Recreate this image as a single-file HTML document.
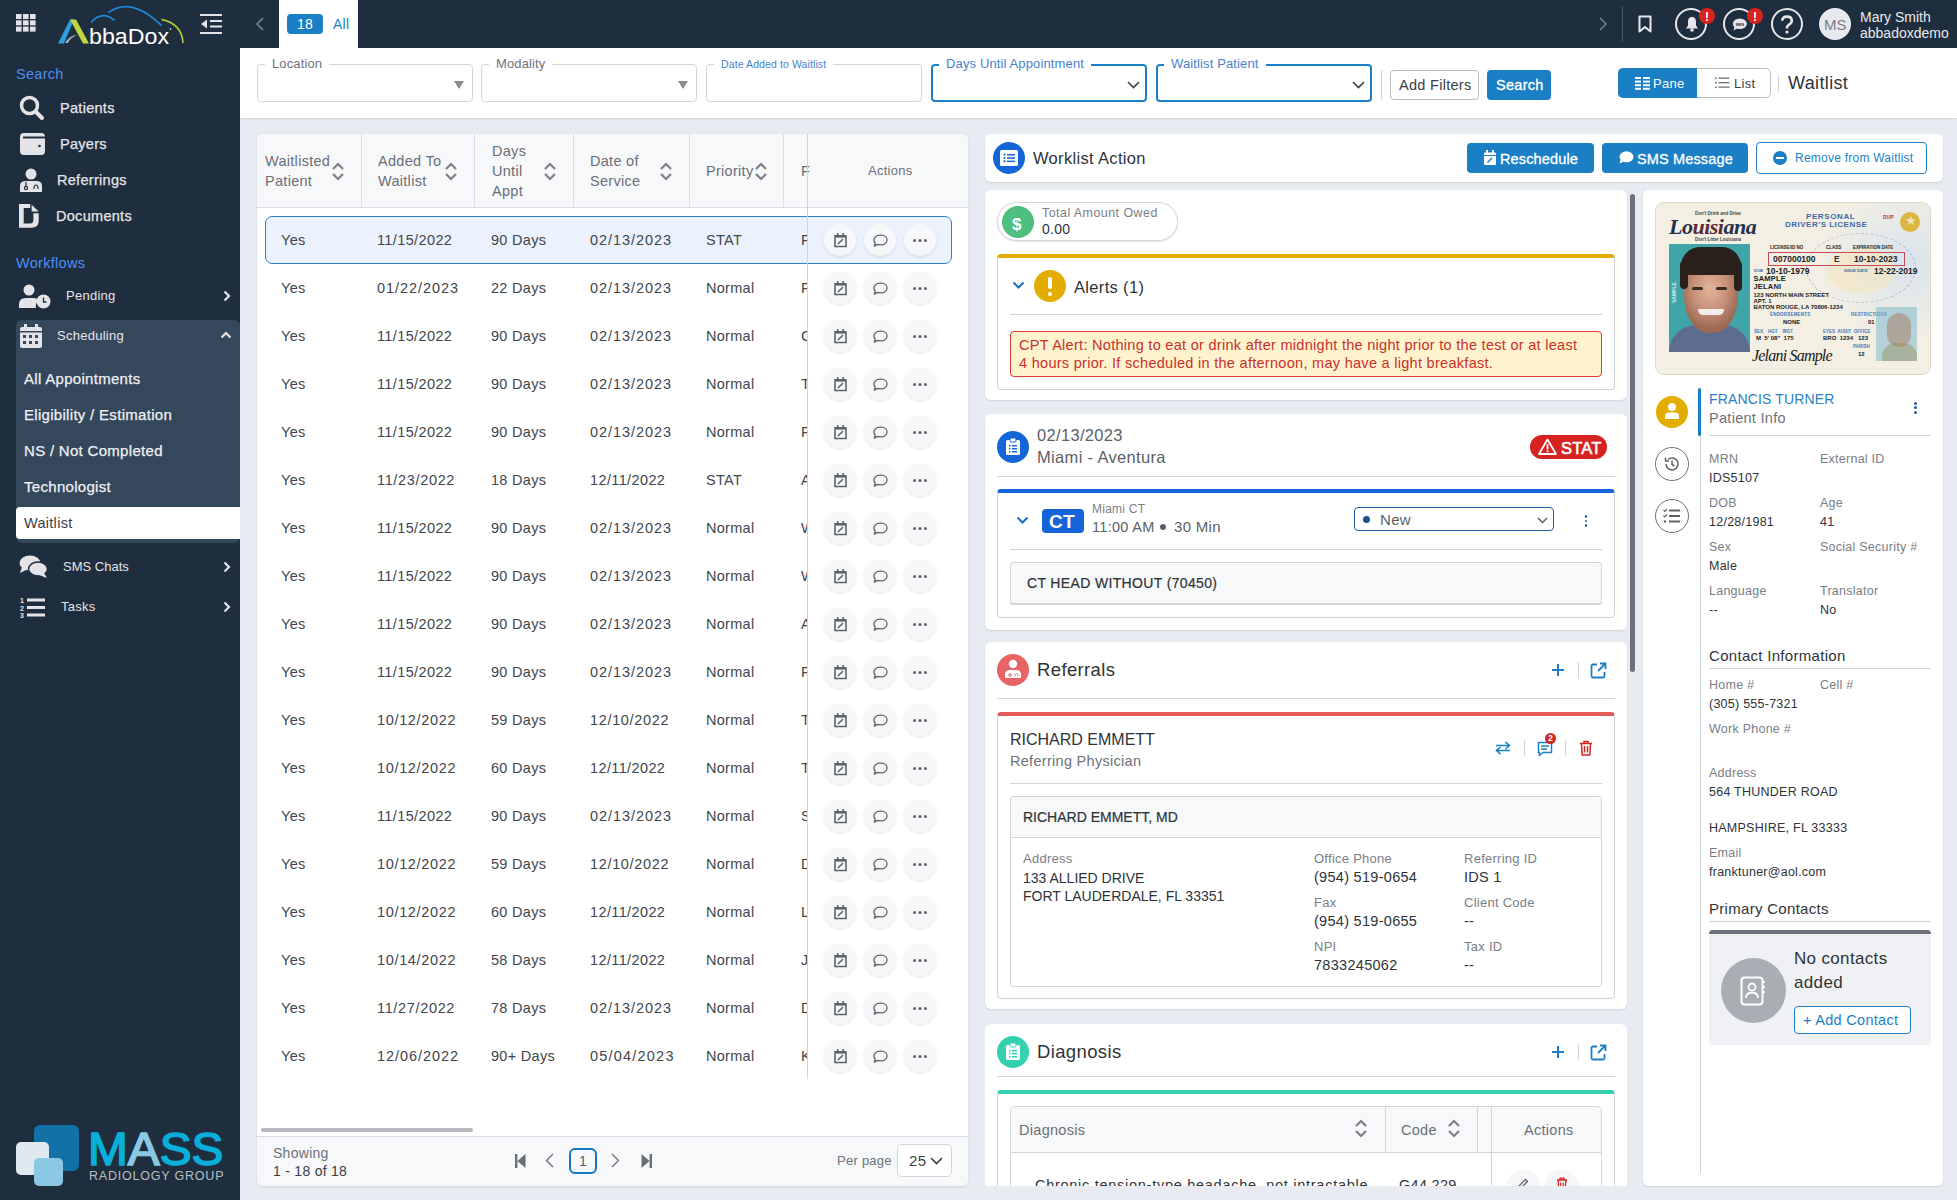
<!DOCTYPE html><html><head><meta charset="utf-8"><style>
html,body{margin:0;padding:0;width:1957px;height:1200px;overflow:hidden;background:#e8ebf2;font-family:"Liberation Sans",sans-serif;}
.a{position:absolute;box-sizing:border-box;}
.t{position:absolute;white-space:nowrap;line-height:1;letter-spacing:0.02em;}
svg{position:absolute;overflow:visible;}
</style></head><body>

<div class="a" style="left:0px;top:0px;width:1957px;height:48px;background:#1f2e3e"></div>
<div class="a" style="left:0px;top:48px;width:240px;height:1152px;background:#1f2e3e"></div>
<svg style="left:16px;top:14px" width="20" height="18"><rect x="0" y="0.0" width="5.6" height="5" fill="#e4e4e8"/><rect x="7" y="0.0" width="5.6" height="5" fill="#e4e4e8"/><rect x="14" y="0.0" width="5.6" height="5" fill="#e4e4e8"/><rect x="0" y="6.3" width="5.6" height="5" fill="#e4e4e8"/><rect x="7" y="6.3" width="5.6" height="5" fill="#e4e4e8"/><rect x="14" y="6.3" width="5.6" height="5" fill="#e4e4e8"/><rect x="0" y="12.6" width="5.6" height="5" fill="#e4e4e8"/><rect x="7" y="12.6" width="5.6" height="5" fill="#e4e4e8"/><rect x="14" y="12.6" width="5.6" height="5" fill="#e4e4e8"/></svg>
<svg style="left:56px;top:2px" width="130" height="44" viewBox="0 0 130 44">
<path d="M52.4 10.7 Q75 -6 105.5 23.6" fill="none" stroke="#1d8ad8" stroke-width="1.6"/>
<path d="M35 20.5 Q46 8 58.5 18.4" fill="none" stroke="#1d8ad8" stroke-width="1.6"/>
<path d="M105.5 17.4 Q126 22 127 41" fill="none" stroke="#b5cc3a" stroke-width="1.6"/>
<polygon points="2,41.5 14,17.5 18,17.5 8,41.5" fill="#2d9fe0"/>
<polygon points="14,17.5 20,17.5 33,41.5 27,41.5" fill="#c2d641"/>
<path d="M9 41 Q 14 33 21 33 Q 14 36 12 41 Z" fill="#aab2ba"/>
<text x="33" y="41.5" font-family="Liberation Sans" font-size="22" fill="#ffffff" textLength="80" lengthAdjust="spacingAndGlyphs">bbaDox</text>
<circle cx="114.5" cy="27" r="0.8" fill="#fff"/>
</svg>
<svg style="left:200px;top:14px" width="22" height="20" viewBox="0 0 22 20">
<rect x="0" y="0" width="22" height="2" fill="#e4e4e8"/>
<rect x="10" y="6" width="12" height="2" fill="#e4e4e8"/>
<rect x="10" y="11.5" width="12" height="2" fill="#e4e4e8"/>
<rect x="0" y="18" width="22" height="2" fill="#e4e4e8"/>
<polygon points="1,10 7,5.5 7,14.5" fill="#e4e4e8"/>
</svg>
<svg style="left:255px;top:17px" width="9" height="14" viewBox="0 0 9 14"><path d="M8 1 L2 7 L8 13" fill="none" stroke="#7d8b99" stroke-width="1.5"/></svg>
<div class="a" style="left:279px;top:0px;width:79px;height:48px;background:#fff"></div>
<div class="a" style="left:287px;top:14px;width:36px;height:20px;background:#1b7fc6;border-radius:4px"></div>
<div class="t " style="left:297px;top:17.15px;font-size:14px;color:#fff;font-weight:400;">18</div>
<div class="t " style="left:333px;top:17.15px;font-size:14px;color:#1b7fc6;font-weight:400;">All</div>
<svg style="left:1599px;top:17px" width="9" height="14" viewBox="0 0 9 14"><path d="M1 1 L7 7 L1 13" fill="none" stroke="#7d8b99" stroke-width="1.3"/></svg>
<div class="a" style="left:1622px;top:6px;width:1px;height:36px;background:#4a5868"></div>
<svg style="left:1638px;top:15px" width="14" height="18" viewBox="0 0 14 18"><path d="M1.5 1.5 H12.5 V16.5 L7 12 L1.5 16.5 Z" fill="none" stroke="#e8e8ec" stroke-width="2" stroke-linejoin="round"/></svg>
<div class="a" style="left:1675px;top:8px;width:32px;height:32px;border:2px solid #e6e6ea;border-radius:50%"></div>
<div class="a" style="left:1723px;top:8px;width:32px;height:32px;border:2px solid #e6e6ea;border-radius:50%"></div>
<div class="a" style="left:1771px;top:8px;width:32px;height:32px;border:2px solid #e6e6ea;border-radius:50%"></div>
<svg style="left:1684.5px;top:16px" width="14" height="16" viewBox="0 0 14 16"><path d="M7 1 C3.8 1 3 3.5 3 6 V9.5 L1 12.5 H13 L11 9.5 V6 C11 3.5 10.2 1 7 1 Z" fill="#e6e6ea"/><circle cx="7" cy="14" r="1.8" fill="#e6e6ea"/></svg>
<svg style="left:1732px;top:18px" width="15" height="13" viewBox="0 0 15 13"><ellipse cx="7.8" cy="5.8" rx="7" ry="5.3" fill="#e6e6ea"/><path d="M2.5 8.5 L1.5 12.5 L6 10 Z" fill="#e6e6ea"/><text x="7.8" y="7.5" font-size="4" text-anchor="middle" fill="#1f2e3e" font-family="Liberation Sans" font-weight="700">SMS</text></svg>
<svg style="left:1780px;top:14.5px" width="14" height="19" viewBox="0 0 14 19"><path d="M2.2 5.8 Q2.2 1.6 7 1.6 Q11.8 1.6 11.8 5.6 Q11.8 8.3 8.8 9.8 Q7 10.8 7 12.6 V13.4" fill="none" stroke="#e6e6ea" stroke-width="2.6"/><circle cx="7" cy="17" r="1.6" fill="#e6e6ea"/></svg>
<div class="a" style="left:1699px;top:8px;width:16px;height:16px;background:#d8231f;border-radius:50%"></div>
<div class="t " style="left:1705px;top:10.84px;font-size:12px;color:#fff;font-weight:700;">!</div>
<div class="a" style="left:1747px;top:8px;width:16px;height:16px;background:#d8231f;border-radius:50%"></div>
<div class="t " style="left:1753px;top:10.84px;font-size:12px;color:#fff;font-weight:700;">!</div>
<div class="a" style="left:1819px;top:8px;width:32px;height:32px;background:#e9eaf0;border-radius:50%"></div>
<div class="t " style="left:1824px;top:17.30px;font-size:15px;color:#7a7e85;font-weight:400;letter-spacing:0">MS</div>
<div class="t " style="left:1860px;top:10.15px;font-size:14px;color:#e8e8ec;font-weight:400;letter-spacing:0">Mary Smith</div>
<div class="t " style="left:1860px;top:26.15px;font-size:14px;color:#e8e8ec;font-weight:400;letter-spacing:0">abbadoxdemo</div>
<div class="t " style="left:16px;top:66.73px;font-size:14.5px;color:#4c8ff0;font-weight:400;">Search</div>
<div class="t " style="left:60px;top:100.73px;font-size:14.5px;color:#e4e4e8;font-weight:400;-webkit-text-stroke:0.25px #e4e4e8">Patients</div>
<div class="t " style="left:60px;top:136.73px;font-size:14.5px;color:#e4e4e8;font-weight:400;-webkit-text-stroke:0.25px #e4e4e8">Payers</div>
<div class="t " style="left:57px;top:172.73px;font-size:14.5px;color:#e4e4e8;font-weight:400;-webkit-text-stroke:0.25px #e4e4e8">Referrings</div>
<div class="t " style="left:56px;top:208.73px;font-size:14.5px;color:#e4e4e8;font-weight:400;-webkit-text-stroke:0.25px #e4e4e8">Documents</div>
<svg style="left:19px;top:95px" width="26" height="26" viewBox="0 0 26 26"><circle cx="10.5" cy="10.5" r="8" fill="none" stroke="#e4e4e8" stroke-width="3.5"/><path d="M16.5 16.5 L23 23" stroke="#e4e4e8" stroke-width="4" stroke-linecap="round"/></svg>
<svg style="left:20px;top:133px" width="25" height="22" viewBox="0 0 25 22"><rect x="0" y="0" width="25" height="22" rx="4" fill="#e4e4e8"/><rect x="3" y="3.5" width="22" height="2" fill="#1f2e3e"/><circle cx="19.5" cy="13" r="1.3" fill="#1f2e3e"/></svg>
<svg style="left:20px;top:168px" width="22" height="24" viewBox="0 0 22 24"><circle cx="11" cy="6" r="5.5" fill="#e4e4e8"/><path d="M0 24 V18 Q0 13 6 13 H16 Q22 13 22 18 V24 Z" fill="#e4e4e8"/><circle cx="6" cy="20" r="1.6" fill="none" stroke="#1f2e3e" stroke-width="1.2"/><path d="M6 18 V14" stroke="#1f2e3e" stroke-width="1.2"/><path d="M14 21 Q14 17 16 17 Q18 17 18 21" fill="none" stroke="#1f2e3e" stroke-width="1.2"/></svg>
<svg style="left:19.3px;top:204px" width="20" height="24" viewBox="0 0 20 24"><path d="M0 0 H11.2 V4 H4.7 V19.5 H11 Q14.4 19.5 14.4 16 V9.2 H19.7 V16.5 Q19.7 23.8 12.5 23.8 H0 Z" fill="#e4e4e8"/><path d="M12.6 0.8 L19.7 7.5 H12.6 Z" fill="#e4e4e8"/></svg>
<div class="t " style="left:16px;top:255.73px;font-size:14.5px;color:#4c8ff0;font-weight:400;">Workflows</div>
<svg style="left:19px;top:284px" width="32" height="25" viewBox="0 0 32 25"><circle cx="10" cy="6" r="5.5" fill="#e4e4e8"/><path d="M0 24 V20 Q0 14 7 14 H14 Q18 14 20 16 Q16 19 17 24 Z" fill="#e4e4e8"/><circle cx="24.5" cy="17.5" r="7" fill="#e4e4e8"/><path d="M24.5 13.5 V18 H27.5" fill="none" stroke="#1f2e3e" stroke-width="1.3"/></svg>
<div class="t " style="left:66px;top:289.00px;font-size:13px;color:#e4e4e8;font-weight:400;">Pending</div>
<svg style="left:223px;top:290px" width="8" height="12" viewBox="0 0 8 12"><path d="M1.5 1.5 L6 6 L1.5 10.5" fill="none" stroke="#e4e4e8" stroke-width="2.2"/></svg>
<div class="a" style="left:16px;top:320px;width:224px;height:223px;background:#34475b;border-radius:6px"></div>
<svg style="left:20px;top:324px" width="22" height="24" viewBox="0 0 22 24"><rect x="0" y="3" width="22" height="21" rx="2" fill="#e4e4e8"/><rect x="4" y="0" width="3" height="5" fill="#e4e4e8"/><rect x="15" y="0" width="3" height="5" fill="#e4e4e8"/><rect x="0" y="7" width="22" height="1.5" fill="#34475b"/><rect x="3" y="11" width="3" height="3" fill="#34475b"/><rect x="9" y="11" width="3" height="3" fill="#34475b"/><rect x="15" y="11" width="3" height="3" fill="#34475b"/><rect x="3" y="17" width="3" height="3" fill="#34475b"/><rect x="9" y="17" width="3" height="3" fill="#34475b"/><rect x="15" y="17" width="3" height="3" fill="#34475b"/></svg>
<div class="t " style="left:57px;top:329.00px;font-size:13px;color:#e4e4e8;font-weight:400;">Scheduling</div>
<svg style="left:220px;top:331px" width="12" height="8" viewBox="0 0 12 8"><path d="M1.5 6.5 L6 2 L10.5 6.5" fill="none" stroke="#e4e4e8" stroke-width="2.2"/></svg>
<div class="t " style="left:24px;top:371.30px;font-size:15px;color:#f0f0f4;font-weight:400;-webkit-text-stroke:0.25px #f0f0f4">All Appointments</div>
<div class="t " style="left:24px;top:407.30px;font-size:15px;color:#f0f0f4;font-weight:400;-webkit-text-stroke:0.25px #f0f0f4">Eligibility / Estimation</div>
<div class="t " style="left:24px;top:443.30px;font-size:15px;color:#f0f0f4;font-weight:400;-webkit-text-stroke:0.25px #f0f0f4">NS / Not Completed</div>
<div class="t " style="left:24px;top:479.30px;font-size:15px;color:#f0f0f4;font-weight:400;-webkit-text-stroke:0.25px #f0f0f4">Technologist</div>
<div class="a" style="left:16px;top:507px;width:224px;height:32px;background:#fff;border-radius:4px 0 0 4px"></div>
<div class="t " style="left:24px;top:515.73px;font-size:14.5px;color:#3b3f45;font-weight:400;">Waitlist</div>
<svg style="left:19px;top:555px" width="29" height="24" viewBox="0 0 29 24"><ellipse cx="11" cy="8" rx="10.5" ry="7.5" fill="#e4e4e8"/><path d="M3 12 L1 18 L9 14 Z" fill="#e4e4e8"/><ellipse cx="19" cy="14" rx="9.5" ry="7" fill="#e4e4e8" stroke="#1f2e3e" stroke-width="1.5"/><path d="M25 18 L28 23 L20 20 Z" fill="#e4e4e8"/></svg>
<div class="t " style="left:63px;top:560.00px;font-size:13px;color:#e4e4e8;font-weight:400;letter-spacing:0">SMS Chats</div>
<svg style="left:223px;top:561px" width="8" height="12" viewBox="0 0 8 12"><path d="M1.5 1.5 L6 6 L1.5 10.5" fill="none" stroke="#e4e4e8" stroke-width="2.2"/></svg>
<svg style="left:20px;top:596px" width="25" height="22" viewBox="0 0 25 22"><text x="0" y="7" font-size="7" font-weight="700" fill="#e4e4e8" font-family="Liberation Sans">1</text><text x="0" y="14.5" font-size="7" font-weight="700" fill="#e4e4e8" font-family="Liberation Sans">2</text><text x="0" y="22" font-size="7" font-weight="700" fill="#e4e4e8" font-family="Liberation Sans">3</text><rect x="7" y="2.5" width="18" height="3" fill="#e4e4e8"/><rect x="7" y="10" width="18" height="3" fill="#e4e4e8"/><rect x="7" y="17.5" width="18" height="3" fill="#e4e4e8"/></svg>
<div class="t " style="left:61px;top:600.00px;font-size:13px;color:#e4e4e8;font-weight:400;">Tasks</div>
<svg style="left:223px;top:601px" width="8" height="12" viewBox="0 0 8 12"><path d="M1.5 1.5 L6 6 L1.5 10.5" fill="none" stroke="#e4e4e8" stroke-width="2.2"/></svg>
<div class="a" style="left:33.5px;top:1125px;width:45.5px;height:45.5px;background:#1271a6;border-radius:6px"></div>
<div class="a" style="left:16px;top:1142px;width:33px;height:33px;background:#e1e9ee;border-radius:5px"></div>
<div class="a" style="left:33.5px;top:1157.5px;width:29px;height:28.5px;background:#8ac8e4;border-radius:5px"></div>
<svg style="left:88px;top:1128px" width="140" height="56" viewBox="0 0 140 56"><text x="0" y="37.3" font-family="Liberation Sans" font-size="47" fill="#0aaedb" stroke="#0aaedb" stroke-width="1.6" textLength="135.5" lengthAdjust="spacingAndGlyphs">M<tspan fill="#8ac8e4" stroke="#8ac8e4">A</tspan>SS</text><text x="1" y="52" font-family="Liberation Sans" font-size="12.5" fill="#b8bec4" textLength="134.5" lengthAdjust="spacing">RADIOLOGY GROUP</text></svg>
<div class="a" style="left:240px;top:48px;width:1717px;height:70px;background:#fff;box-shadow:0 1px 2px rgba(0,0,0,0.10)"></div>
<div class="a" style="left:257px;top:64px;width:216px;height:38px;border:1px solid #d3d5da;border-radius:4px"></div>
<div class="t" style="left:265px;top:57.00px;height:10px;font-size:13px;line-height:1;color:#6e7278;background:#fff;padding:0 7px;letter-spacing:0.01em">Location</div>
<svg style="left:454px;top:81px" width="10" height="8" viewBox="0 0 10 8"><polygon points="0,0 10,0 5,8" fill="#8b8d94"/></svg>
<div class="a" style="left:481px;top:64px;width:216px;height:38px;border:1px solid #d3d5da;border-radius:4px"></div>
<div class="t" style="left:489px;top:57.00px;height:10px;font-size:13px;line-height:1;color:#6e7278;background:#fff;padding:0 7px;letter-spacing:0.01em">Modality</div>
<svg style="left:678px;top:81px" width="10" height="8" viewBox="0 0 10 8"><polygon points="0,0 10,0 5,8" fill="#8b8d94"/></svg>
<div class="a" style="left:706px;top:64px;width:216px;height:38px;border:1px solid #d3d5da;border-radius:4px"></div>
<div class="t" style="left:714px;top:58.61px;height:10px;font-size:10.5px;line-height:1;color:#4a7fd0;background:#fff;padding:0 7px;letter-spacing:0.01em">Date Added to Waitlist</div>
<div class="a" style="left:931px;top:64px;width:216px;height:38px;border:2px solid #1b7fc6;border-radius:4px"></div>
<div class="t" style="left:939px;top:57.00px;height:10px;font-size:13px;line-height:1;color:#4a7fd0;background:#fff;padding:0 7px;letter-spacing:0.01em">Days Until Appointment</div>
<svg style="left:1127px;top:80.5px" width="13" height="8" viewBox="0 0 13 8"><path d="M1 1 L6.5 6.5 L12 1" fill="none" stroke="#3b3f45" stroke-width="1.6"/></svg>
<div class="a" style="left:1156px;top:64px;width:216px;height:38px;border:2px solid #1b7fc6;border-radius:4px"></div>
<div class="t" style="left:1164px;top:57.00px;height:10px;font-size:13px;line-height:1;color:#4a7fd0;background:#fff;padding:0 7px;letter-spacing:0.01em">Waitlist Patient</div>
<svg style="left:1352px;top:80.5px" width="13" height="8" viewBox="0 0 13 8"><path d="M1 1 L6.5 6.5 L12 1" fill="none" stroke="#3b3f45" stroke-width="1.6"/></svg>
<div class="a" style="left:1381px;top:70px;width:1px;height:30px;background:#d3d5da"></div>
<div class="a" style="left:1390px;top:70px;width:89px;height:30px;border:1px solid #b8bbc1;border-radius:4px;background:#fff"></div>
<div class="t " style="left:1399px;top:77.73px;font-size:14.5px;color:#3b3f45;font-weight:400;">Add Filters</div>
<div class="a" style="left:1487px;top:70px;width:64px;height:30px;background:#1b7fc6;border-radius:4px"></div>
<div class="t " style="left:1496px;top:77.73px;font-size:14.5px;color:#fff;font-weight:400;-webkit-text-stroke:0.3px #fff">Search</div>
<div class="a" style="left:1618px;top:68px;width:153px;height:30px;border:1px solid #b8bbc1;border-radius:5px;background:#fff"></div>
<div class="a" style="left:1618px;top:68px;width:79px;height:30px;background:#1b7fc6;border-radius:5px 0 0 5px"></div>
<svg style="left:1635px;top:77px" width="15" height="13" viewBox="0 0 15 13"><rect x="0" y="0" width="6" height="2" fill="#fff"/><rect x="8" y="0" width="7" height="2" fill="#fff"/><rect x="0" y="3.6" width="6" height="2" fill="#fff"/><rect x="8" y="3.6" width="7" height="2" fill="#fff"/><rect x="0" y="7.2" width="6" height="2" fill="#fff"/><rect x="8" y="7.2" width="7" height="2" fill="#fff"/><rect x="0" y="10.8" width="6" height="2" fill="#fff"/><rect x="8" y="10.8" width="7" height="2" fill="#fff"/></svg>
<div class="t " style="left:1653px;top:77.00px;font-size:13px;color:#fff;font-weight:400;">Pane</div>
<svg style="left:1715px;top:77px" width="15" height="12" viewBox="0 0 15 12"><rect x="0" y="0.5" width="1.6" height="1.6" fill="#6e7278"/><rect x="3.5" y="0.5" width="11" height="1.3" fill="#6e7278"/><rect x="0" y="5" width="1.6" height="1.6" fill="#6e7278"/><rect x="3.5" y="5" width="11" height="1.3" fill="#6e7278"/><rect x="0" y="9.5" width="1.6" height="1.6" fill="#6e7278"/><rect x="3.5" y="9.5" width="11" height="1.3" fill="#6e7278"/></svg>
<div class="t " style="left:1734px;top:77.00px;font-size:13px;color:#3b3f45;font-weight:400;">List</div>
<div class="a" style="left:1778px;top:75px;width:1px;height:17px;background:#d3d5da"></div>
<div class="t " style="left:1788px;top:73.76px;font-size:18px;color:#2f3338;font-weight:400;">Waitlist</div>
<div class="a" style="left:257px;top:134px;width:711px;height:1052px;background:#fff;border-radius:6px;box-shadow:0 1px 3px rgba(0,0,0,0.10)"></div>
<div class="a" style="left:257px;top:134px;width:711px;height:74px;background:#f7f8fa;border-bottom:1px solid #dcdfe4;border-radius:6px 6px 0 0"></div>
<div class="a" style="left:361px;top:134px;width:1px;height:73px;background:#dcdfe4"></div>
<div class="a" style="left:474px;top:134px;width:1px;height:73px;background:#dcdfe4"></div>
<div class="a" style="left:573px;top:134px;width:1px;height:73px;background:#dcdfe4"></div>
<div class="a" style="left:689px;top:134px;width:1px;height:73px;background:#dcdfe4"></div>
<div class="a" style="left:783px;top:134px;width:1px;height:73px;background:#dcdfe4"></div>
<div class="t " style="left:265px;top:153.73px;font-size:14.5px;color:#6b6f76;font-weight:400;">Waitlisted</div>
<div class="t " style="left:265px;top:173.73px;font-size:14.5px;color:#6b6f76;font-weight:400;">Patient</div>
<svg style="left:331px;top:162px" width="14" height="19" viewBox="0 0 14 19"><path d="M2 7 L7 2 L12 7 M2 12 L7 17 L12 12" fill="none" stroke="#7d8087" stroke-width="2.2"/></svg>
<div class="t " style="left:378px;top:153.73px;font-size:14.5px;color:#6b6f76;font-weight:400;">Added To</div>
<div class="t " style="left:378px;top:173.73px;font-size:14.5px;color:#6b6f76;font-weight:400;">Waitlist</div>
<svg style="left:444px;top:162px" width="14" height="19" viewBox="0 0 14 19"><path d="M2 7 L7 2 L12 7 M2 12 L7 17 L12 12" fill="none" stroke="#7d8087" stroke-width="2.2"/></svg>
<div class="t " style="left:492px;top:143.73px;font-size:14.5px;color:#6b6f76;font-weight:400;">Days</div>
<div class="t " style="left:492px;top:163.73px;font-size:14.5px;color:#6b6f76;font-weight:400;">Until</div>
<div class="t " style="left:492px;top:183.73px;font-size:14.5px;color:#6b6f76;font-weight:400;">Appt</div>
<svg style="left:543px;top:162px" width="14" height="19" viewBox="0 0 14 19"><path d="M2 7 L7 2 L12 7 M2 12 L7 17 L12 12" fill="none" stroke="#7d8087" stroke-width="2.2"/></svg>
<div class="t " style="left:590px;top:153.73px;font-size:14.5px;color:#6b6f76;font-weight:400;">Date of</div>
<div class="t " style="left:590px;top:173.73px;font-size:14.5px;color:#6b6f76;font-weight:400;">Service</div>
<svg style="left:659px;top:162px" width="14" height="19" viewBox="0 0 14 19"><path d="M2 7 L7 2 L12 7 M2 12 L7 17 L12 12" fill="none" stroke="#7d8087" stroke-width="2.2"/></svg>
<div class="t " style="left:706px;top:163.73px;font-size:14.5px;color:#6b6f76;font-weight:400;">Priority</div>
<svg style="left:754px;top:162px" width="14" height="19" viewBox="0 0 14 19"><path d="M2 7 L7 2 L12 7 M2 12 L7 17 L12 12" fill="none" stroke="#7d8087" stroke-width="2.2"/></svg>
<div class="t " style="left:801px;top:163.73px;font-size:14.5px;color:#6b6f76;font-weight:400;">F</div>
<div class="t " style="left:868px;top:164.00px;font-size:13px;color:#6b6f76;font-weight:400;">Actions</div>
<div class="a" style="left:265px;top:216px;width:687px;height:48px;background:#ebf2fd;border:1.5px solid #2b80c5;border-radius:7px"></div>
<div class="t " style="left:281px;top:232.73px;font-size:14.5px;color:#42464c;font-weight:400;">Yes</div>
<div class="t " style="left:377px;top:232.73px;font-size:14.5px;color:#42464c;font-weight:400;letter-spacing:0.38px">11/15/2022</div>
<div class="t " style="left:491px;top:232.73px;font-size:14.5px;color:#42464c;font-weight:400;">90 Days</div>
<div class="t " style="left:590px;top:232.73px;font-size:14.5px;color:#42464c;font-weight:400;letter-spacing:0.93px">02/13/2023</div>
<div class="t " style="left:706px;top:232.73px;font-size:14.5px;color:#42464c;font-weight:400;">STAT</div>
<div class="a" style="left:800px;top:230px;width:7px;height:20px;overflow:hidden"><div class="t" style="left:1px;top:2.73px;font-size:14.5px;color:#42464c">F</div></div>
<div class="a" style="left:824px;top:224px;width:32px;height:32px;background:#f6f7f9;border-radius:50%;box-shadow:0 1px 3px rgba(0,0,0,0.10)"></div>
<div class="a" style="left:864px;top:224px;width:32px;height:32px;background:#f6f7f9;border-radius:50%;box-shadow:0 1px 3px rgba(0,0,0,0.10)"></div>
<div class="a" style="left:904px;top:224px;width:32px;height:32px;background:#f6f7f9;border-radius:50%;box-shadow:0 1px 3px rgba(0,0,0,0.10)"></div>
<svg style="left:834px;top:233px" width="13" height="14" viewBox="0 0 13 14"><path d="M1 3 H12 V13.5 H1 Z" fill="none" stroke="#5f6368" stroke-width="1.6"/><rect x="1" y="2" width="11" height="2.6" fill="#5f6368"/><rect x="3" y="0" width="1.6" height="3" fill="#5f6368"/><rect x="8.4" y="0" width="1.6" height="3" fill="#5f6368"/><path d="M4 11 L9 6" stroke="#5f6368" stroke-width="1.6"/></svg>
<svg style="left:873px;top:233.5px" width="15" height="13" viewBox="0 0 15 13"><path d="M7.5 1.2 C11.5 1.2 14 3.3 14 6 C14 8.7 11.5 10.8 7.5 10.8 C6.5 10.8 5.6 10.7 4.8 10.4 L1.2 12.2 L2.3 9.3 C1.5 8.4 1 7.3 1 6 C1 3.3 3.5 1.2 7.5 1.2 Z" fill="none" stroke="#5f6368" stroke-width="1.3" stroke-linejoin="round"/></svg>
<svg style="left:913px;top:238.5px" width="14" height="3" viewBox="0 0 14 3"><circle cx="1.5" cy="1.5" r="1.5" fill="#5f6368"/><circle cx="7" cy="1.5" r="1.5" fill="#5f6368"/><circle cx="12.5" cy="1.5" r="1.5" fill="#5f6368"/></svg>
<div class="t " style="left:281px;top:280.73px;font-size:14.5px;color:#42464c;font-weight:400;">Yes</div>
<div class="t " style="left:377px;top:280.73px;font-size:14.5px;color:#42464c;font-weight:400;letter-spacing:0.93px">01/22/2023</div>
<div class="t " style="left:491px;top:280.73px;font-size:14.5px;color:#42464c;font-weight:400;">22 Days</div>
<div class="t " style="left:590px;top:280.73px;font-size:14.5px;color:#42464c;font-weight:400;letter-spacing:0.93px">02/13/2023</div>
<div class="t " style="left:706px;top:280.73px;font-size:14.5px;color:#42464c;font-weight:400;">Normal</div>
<div class="a" style="left:800px;top:278px;width:7px;height:20px;overflow:hidden"><div class="t" style="left:1px;top:2.73px;font-size:14.5px;color:#42464c">F</div></div>
<div class="a" style="left:824px;top:272px;width:32px;height:32px;background:#f6f7f9;border-radius:50%;box-shadow:0 1px 3px rgba(0,0,0,0.10)"></div>
<div class="a" style="left:864px;top:272px;width:32px;height:32px;background:#f6f7f9;border-radius:50%;box-shadow:0 1px 3px rgba(0,0,0,0.10)"></div>
<div class="a" style="left:904px;top:272px;width:32px;height:32px;background:#f6f7f9;border-radius:50%;box-shadow:0 1px 3px rgba(0,0,0,0.10)"></div>
<svg style="left:834px;top:281px" width="13" height="14" viewBox="0 0 13 14"><path d="M1 3 H12 V13.5 H1 Z" fill="none" stroke="#5f6368" stroke-width="1.6"/><rect x="1" y="2" width="11" height="2.6" fill="#5f6368"/><rect x="3" y="0" width="1.6" height="3" fill="#5f6368"/><rect x="8.4" y="0" width="1.6" height="3" fill="#5f6368"/><path d="M4 11 L9 6" stroke="#5f6368" stroke-width="1.6"/></svg>
<svg style="left:873px;top:281.5px" width="15" height="13" viewBox="0 0 15 13"><path d="M7.5 1.2 C11.5 1.2 14 3.3 14 6 C14 8.7 11.5 10.8 7.5 10.8 C6.5 10.8 5.6 10.7 4.8 10.4 L1.2 12.2 L2.3 9.3 C1.5 8.4 1 7.3 1 6 C1 3.3 3.5 1.2 7.5 1.2 Z" fill="none" stroke="#5f6368" stroke-width="1.3" stroke-linejoin="round"/></svg>
<svg style="left:913px;top:286.5px" width="14" height="3" viewBox="0 0 14 3"><circle cx="1.5" cy="1.5" r="1.5" fill="#5f6368"/><circle cx="7" cy="1.5" r="1.5" fill="#5f6368"/><circle cx="12.5" cy="1.5" r="1.5" fill="#5f6368"/></svg>
<div class="t " style="left:281px;top:328.73px;font-size:14.5px;color:#42464c;font-weight:400;">Yes</div>
<div class="t " style="left:377px;top:328.73px;font-size:14.5px;color:#42464c;font-weight:400;letter-spacing:0.38px">11/15/2022</div>
<div class="t " style="left:491px;top:328.73px;font-size:14.5px;color:#42464c;font-weight:400;">90 Days</div>
<div class="t " style="left:590px;top:328.73px;font-size:14.5px;color:#42464c;font-weight:400;letter-spacing:0.93px">02/13/2023</div>
<div class="t " style="left:706px;top:328.73px;font-size:14.5px;color:#42464c;font-weight:400;">Normal</div>
<div class="a" style="left:800px;top:326px;width:7px;height:20px;overflow:hidden"><div class="t" style="left:1px;top:2.73px;font-size:14.5px;color:#42464c">G</div></div>
<div class="a" style="left:824px;top:320px;width:32px;height:32px;background:#f6f7f9;border-radius:50%;box-shadow:0 1px 3px rgba(0,0,0,0.10)"></div>
<div class="a" style="left:864px;top:320px;width:32px;height:32px;background:#f6f7f9;border-radius:50%;box-shadow:0 1px 3px rgba(0,0,0,0.10)"></div>
<div class="a" style="left:904px;top:320px;width:32px;height:32px;background:#f6f7f9;border-radius:50%;box-shadow:0 1px 3px rgba(0,0,0,0.10)"></div>
<svg style="left:834px;top:329px" width="13" height="14" viewBox="0 0 13 14"><path d="M1 3 H12 V13.5 H1 Z" fill="none" stroke="#5f6368" stroke-width="1.6"/><rect x="1" y="2" width="11" height="2.6" fill="#5f6368"/><rect x="3" y="0" width="1.6" height="3" fill="#5f6368"/><rect x="8.4" y="0" width="1.6" height="3" fill="#5f6368"/><path d="M4 11 L9 6" stroke="#5f6368" stroke-width="1.6"/></svg>
<svg style="left:873px;top:329.5px" width="15" height="13" viewBox="0 0 15 13"><path d="M7.5 1.2 C11.5 1.2 14 3.3 14 6 C14 8.7 11.5 10.8 7.5 10.8 C6.5 10.8 5.6 10.7 4.8 10.4 L1.2 12.2 L2.3 9.3 C1.5 8.4 1 7.3 1 6 C1 3.3 3.5 1.2 7.5 1.2 Z" fill="none" stroke="#5f6368" stroke-width="1.3" stroke-linejoin="round"/></svg>
<svg style="left:913px;top:334.5px" width="14" height="3" viewBox="0 0 14 3"><circle cx="1.5" cy="1.5" r="1.5" fill="#5f6368"/><circle cx="7" cy="1.5" r="1.5" fill="#5f6368"/><circle cx="12.5" cy="1.5" r="1.5" fill="#5f6368"/></svg>
<div class="t " style="left:281px;top:376.73px;font-size:14.5px;color:#42464c;font-weight:400;">Yes</div>
<div class="t " style="left:377px;top:376.73px;font-size:14.5px;color:#42464c;font-weight:400;letter-spacing:0.38px">11/15/2022</div>
<div class="t " style="left:491px;top:376.73px;font-size:14.5px;color:#42464c;font-weight:400;">90 Days</div>
<div class="t " style="left:590px;top:376.73px;font-size:14.5px;color:#42464c;font-weight:400;letter-spacing:0.93px">02/13/2023</div>
<div class="t " style="left:706px;top:376.73px;font-size:14.5px;color:#42464c;font-weight:400;">Normal</div>
<div class="a" style="left:800px;top:374px;width:7px;height:20px;overflow:hidden"><div class="t" style="left:1px;top:2.73px;font-size:14.5px;color:#42464c">T</div></div>
<div class="a" style="left:824px;top:368px;width:32px;height:32px;background:#f6f7f9;border-radius:50%;box-shadow:0 1px 3px rgba(0,0,0,0.10)"></div>
<div class="a" style="left:864px;top:368px;width:32px;height:32px;background:#f6f7f9;border-radius:50%;box-shadow:0 1px 3px rgba(0,0,0,0.10)"></div>
<div class="a" style="left:904px;top:368px;width:32px;height:32px;background:#f6f7f9;border-radius:50%;box-shadow:0 1px 3px rgba(0,0,0,0.10)"></div>
<svg style="left:834px;top:377px" width="13" height="14" viewBox="0 0 13 14"><path d="M1 3 H12 V13.5 H1 Z" fill="none" stroke="#5f6368" stroke-width="1.6"/><rect x="1" y="2" width="11" height="2.6" fill="#5f6368"/><rect x="3" y="0" width="1.6" height="3" fill="#5f6368"/><rect x="8.4" y="0" width="1.6" height="3" fill="#5f6368"/><path d="M4 11 L9 6" stroke="#5f6368" stroke-width="1.6"/></svg>
<svg style="left:873px;top:377.5px" width="15" height="13" viewBox="0 0 15 13"><path d="M7.5 1.2 C11.5 1.2 14 3.3 14 6 C14 8.7 11.5 10.8 7.5 10.8 C6.5 10.8 5.6 10.7 4.8 10.4 L1.2 12.2 L2.3 9.3 C1.5 8.4 1 7.3 1 6 C1 3.3 3.5 1.2 7.5 1.2 Z" fill="none" stroke="#5f6368" stroke-width="1.3" stroke-linejoin="round"/></svg>
<svg style="left:913px;top:382.5px" width="14" height="3" viewBox="0 0 14 3"><circle cx="1.5" cy="1.5" r="1.5" fill="#5f6368"/><circle cx="7" cy="1.5" r="1.5" fill="#5f6368"/><circle cx="12.5" cy="1.5" r="1.5" fill="#5f6368"/></svg>
<div class="t " style="left:281px;top:424.73px;font-size:14.5px;color:#42464c;font-weight:400;">Yes</div>
<div class="t " style="left:377px;top:424.73px;font-size:14.5px;color:#42464c;font-weight:400;letter-spacing:0.38px">11/15/2022</div>
<div class="t " style="left:491px;top:424.73px;font-size:14.5px;color:#42464c;font-weight:400;">90 Days</div>
<div class="t " style="left:590px;top:424.73px;font-size:14.5px;color:#42464c;font-weight:400;letter-spacing:0.93px">02/13/2023</div>
<div class="t " style="left:706px;top:424.73px;font-size:14.5px;color:#42464c;font-weight:400;">Normal</div>
<div class="a" style="left:800px;top:422px;width:7px;height:20px;overflow:hidden"><div class="t" style="left:1px;top:2.73px;font-size:14.5px;color:#42464c">F</div></div>
<div class="a" style="left:824px;top:416px;width:32px;height:32px;background:#f6f7f9;border-radius:50%;box-shadow:0 1px 3px rgba(0,0,0,0.10)"></div>
<div class="a" style="left:864px;top:416px;width:32px;height:32px;background:#f6f7f9;border-radius:50%;box-shadow:0 1px 3px rgba(0,0,0,0.10)"></div>
<div class="a" style="left:904px;top:416px;width:32px;height:32px;background:#f6f7f9;border-radius:50%;box-shadow:0 1px 3px rgba(0,0,0,0.10)"></div>
<svg style="left:834px;top:425px" width="13" height="14" viewBox="0 0 13 14"><path d="M1 3 H12 V13.5 H1 Z" fill="none" stroke="#5f6368" stroke-width="1.6"/><rect x="1" y="2" width="11" height="2.6" fill="#5f6368"/><rect x="3" y="0" width="1.6" height="3" fill="#5f6368"/><rect x="8.4" y="0" width="1.6" height="3" fill="#5f6368"/><path d="M4 11 L9 6" stroke="#5f6368" stroke-width="1.6"/></svg>
<svg style="left:873px;top:425.5px" width="15" height="13" viewBox="0 0 15 13"><path d="M7.5 1.2 C11.5 1.2 14 3.3 14 6 C14 8.7 11.5 10.8 7.5 10.8 C6.5 10.8 5.6 10.7 4.8 10.4 L1.2 12.2 L2.3 9.3 C1.5 8.4 1 7.3 1 6 C1 3.3 3.5 1.2 7.5 1.2 Z" fill="none" stroke="#5f6368" stroke-width="1.3" stroke-linejoin="round"/></svg>
<svg style="left:913px;top:430.5px" width="14" height="3" viewBox="0 0 14 3"><circle cx="1.5" cy="1.5" r="1.5" fill="#5f6368"/><circle cx="7" cy="1.5" r="1.5" fill="#5f6368"/><circle cx="12.5" cy="1.5" r="1.5" fill="#5f6368"/></svg>
<div class="t " style="left:281px;top:472.73px;font-size:14.5px;color:#42464c;font-weight:400;">Yes</div>
<div class="t " style="left:377px;top:472.73px;font-size:14.5px;color:#42464c;font-weight:400;letter-spacing:0.66px">11/23/2022</div>
<div class="t " style="left:491px;top:472.73px;font-size:14.5px;color:#42464c;font-weight:400;">18 Days</div>
<div class="t " style="left:590px;top:472.73px;font-size:14.5px;color:#42464c;font-weight:400;letter-spacing:0.38px">12/11/2022</div>
<div class="t " style="left:706px;top:472.73px;font-size:14.5px;color:#42464c;font-weight:400;">STAT</div>
<div class="a" style="left:800px;top:470px;width:7px;height:20px;overflow:hidden"><div class="t" style="left:1px;top:2.73px;font-size:14.5px;color:#42464c">A</div></div>
<div class="a" style="left:824px;top:464px;width:32px;height:32px;background:#f6f7f9;border-radius:50%;box-shadow:0 1px 3px rgba(0,0,0,0.10)"></div>
<div class="a" style="left:864px;top:464px;width:32px;height:32px;background:#f6f7f9;border-radius:50%;box-shadow:0 1px 3px rgba(0,0,0,0.10)"></div>
<div class="a" style="left:904px;top:464px;width:32px;height:32px;background:#f6f7f9;border-radius:50%;box-shadow:0 1px 3px rgba(0,0,0,0.10)"></div>
<svg style="left:834px;top:473px" width="13" height="14" viewBox="0 0 13 14"><path d="M1 3 H12 V13.5 H1 Z" fill="none" stroke="#5f6368" stroke-width="1.6"/><rect x="1" y="2" width="11" height="2.6" fill="#5f6368"/><rect x="3" y="0" width="1.6" height="3" fill="#5f6368"/><rect x="8.4" y="0" width="1.6" height="3" fill="#5f6368"/><path d="M4 11 L9 6" stroke="#5f6368" stroke-width="1.6"/></svg>
<svg style="left:873px;top:473.5px" width="15" height="13" viewBox="0 0 15 13"><path d="M7.5 1.2 C11.5 1.2 14 3.3 14 6 C14 8.7 11.5 10.8 7.5 10.8 C6.5 10.8 5.6 10.7 4.8 10.4 L1.2 12.2 L2.3 9.3 C1.5 8.4 1 7.3 1 6 C1 3.3 3.5 1.2 7.5 1.2 Z" fill="none" stroke="#5f6368" stroke-width="1.3" stroke-linejoin="round"/></svg>
<svg style="left:913px;top:478.5px" width="14" height="3" viewBox="0 0 14 3"><circle cx="1.5" cy="1.5" r="1.5" fill="#5f6368"/><circle cx="7" cy="1.5" r="1.5" fill="#5f6368"/><circle cx="12.5" cy="1.5" r="1.5" fill="#5f6368"/></svg>
<div class="t " style="left:281px;top:520.73px;font-size:14.5px;color:#42464c;font-weight:400;">Yes</div>
<div class="t " style="left:377px;top:520.73px;font-size:14.5px;color:#42464c;font-weight:400;letter-spacing:0.38px">11/15/2022</div>
<div class="t " style="left:491px;top:520.73px;font-size:14.5px;color:#42464c;font-weight:400;">90 Days</div>
<div class="t " style="left:590px;top:520.73px;font-size:14.5px;color:#42464c;font-weight:400;letter-spacing:0.93px">02/13/2023</div>
<div class="t " style="left:706px;top:520.73px;font-size:14.5px;color:#42464c;font-weight:400;">Normal</div>
<div class="a" style="left:800px;top:518px;width:7px;height:20px;overflow:hidden"><div class="t" style="left:1px;top:2.73px;font-size:14.5px;color:#42464c">W</div></div>
<div class="a" style="left:824px;top:512px;width:32px;height:32px;background:#f6f7f9;border-radius:50%;box-shadow:0 1px 3px rgba(0,0,0,0.10)"></div>
<div class="a" style="left:864px;top:512px;width:32px;height:32px;background:#f6f7f9;border-radius:50%;box-shadow:0 1px 3px rgba(0,0,0,0.10)"></div>
<div class="a" style="left:904px;top:512px;width:32px;height:32px;background:#f6f7f9;border-radius:50%;box-shadow:0 1px 3px rgba(0,0,0,0.10)"></div>
<svg style="left:834px;top:521px" width="13" height="14" viewBox="0 0 13 14"><path d="M1 3 H12 V13.5 H1 Z" fill="none" stroke="#5f6368" stroke-width="1.6"/><rect x="1" y="2" width="11" height="2.6" fill="#5f6368"/><rect x="3" y="0" width="1.6" height="3" fill="#5f6368"/><rect x="8.4" y="0" width="1.6" height="3" fill="#5f6368"/><path d="M4 11 L9 6" stroke="#5f6368" stroke-width="1.6"/></svg>
<svg style="left:873px;top:521.5px" width="15" height="13" viewBox="0 0 15 13"><path d="M7.5 1.2 C11.5 1.2 14 3.3 14 6 C14 8.7 11.5 10.8 7.5 10.8 C6.5 10.8 5.6 10.7 4.8 10.4 L1.2 12.2 L2.3 9.3 C1.5 8.4 1 7.3 1 6 C1 3.3 3.5 1.2 7.5 1.2 Z" fill="none" stroke="#5f6368" stroke-width="1.3" stroke-linejoin="round"/></svg>
<svg style="left:913px;top:526.5px" width="14" height="3" viewBox="0 0 14 3"><circle cx="1.5" cy="1.5" r="1.5" fill="#5f6368"/><circle cx="7" cy="1.5" r="1.5" fill="#5f6368"/><circle cx="12.5" cy="1.5" r="1.5" fill="#5f6368"/></svg>
<div class="t " style="left:281px;top:568.73px;font-size:14.5px;color:#42464c;font-weight:400;">Yes</div>
<div class="t " style="left:377px;top:568.73px;font-size:14.5px;color:#42464c;font-weight:400;letter-spacing:0.38px">11/15/2022</div>
<div class="t " style="left:491px;top:568.73px;font-size:14.5px;color:#42464c;font-weight:400;">90 Days</div>
<div class="t " style="left:590px;top:568.73px;font-size:14.5px;color:#42464c;font-weight:400;letter-spacing:0.93px">02/13/2023</div>
<div class="t " style="left:706px;top:568.73px;font-size:14.5px;color:#42464c;font-weight:400;">Normal</div>
<div class="a" style="left:800px;top:566px;width:7px;height:20px;overflow:hidden"><div class="t" style="left:1px;top:2.73px;font-size:14.5px;color:#42464c">W</div></div>
<div class="a" style="left:824px;top:560px;width:32px;height:32px;background:#f6f7f9;border-radius:50%;box-shadow:0 1px 3px rgba(0,0,0,0.10)"></div>
<div class="a" style="left:864px;top:560px;width:32px;height:32px;background:#f6f7f9;border-radius:50%;box-shadow:0 1px 3px rgba(0,0,0,0.10)"></div>
<div class="a" style="left:904px;top:560px;width:32px;height:32px;background:#f6f7f9;border-radius:50%;box-shadow:0 1px 3px rgba(0,0,0,0.10)"></div>
<svg style="left:834px;top:569px" width="13" height="14" viewBox="0 0 13 14"><path d="M1 3 H12 V13.5 H1 Z" fill="none" stroke="#5f6368" stroke-width="1.6"/><rect x="1" y="2" width="11" height="2.6" fill="#5f6368"/><rect x="3" y="0" width="1.6" height="3" fill="#5f6368"/><rect x="8.4" y="0" width="1.6" height="3" fill="#5f6368"/><path d="M4 11 L9 6" stroke="#5f6368" stroke-width="1.6"/></svg>
<svg style="left:873px;top:569.5px" width="15" height="13" viewBox="0 0 15 13"><path d="M7.5 1.2 C11.5 1.2 14 3.3 14 6 C14 8.7 11.5 10.8 7.5 10.8 C6.5 10.8 5.6 10.7 4.8 10.4 L1.2 12.2 L2.3 9.3 C1.5 8.4 1 7.3 1 6 C1 3.3 3.5 1.2 7.5 1.2 Z" fill="none" stroke="#5f6368" stroke-width="1.3" stroke-linejoin="round"/></svg>
<svg style="left:913px;top:574.5px" width="14" height="3" viewBox="0 0 14 3"><circle cx="1.5" cy="1.5" r="1.5" fill="#5f6368"/><circle cx="7" cy="1.5" r="1.5" fill="#5f6368"/><circle cx="12.5" cy="1.5" r="1.5" fill="#5f6368"/></svg>
<div class="t " style="left:281px;top:616.73px;font-size:14.5px;color:#42464c;font-weight:400;">Yes</div>
<div class="t " style="left:377px;top:616.73px;font-size:14.5px;color:#42464c;font-weight:400;letter-spacing:0.38px">11/15/2022</div>
<div class="t " style="left:491px;top:616.73px;font-size:14.5px;color:#42464c;font-weight:400;">90 Days</div>
<div class="t " style="left:590px;top:616.73px;font-size:14.5px;color:#42464c;font-weight:400;letter-spacing:0.93px">02/13/2023</div>
<div class="t " style="left:706px;top:616.73px;font-size:14.5px;color:#42464c;font-weight:400;">Normal</div>
<div class="a" style="left:800px;top:614px;width:7px;height:20px;overflow:hidden"><div class="t" style="left:1px;top:2.73px;font-size:14.5px;color:#42464c">A</div></div>
<div class="a" style="left:824px;top:608px;width:32px;height:32px;background:#f6f7f9;border-radius:50%;box-shadow:0 1px 3px rgba(0,0,0,0.10)"></div>
<div class="a" style="left:864px;top:608px;width:32px;height:32px;background:#f6f7f9;border-radius:50%;box-shadow:0 1px 3px rgba(0,0,0,0.10)"></div>
<div class="a" style="left:904px;top:608px;width:32px;height:32px;background:#f6f7f9;border-radius:50%;box-shadow:0 1px 3px rgba(0,0,0,0.10)"></div>
<svg style="left:834px;top:617px" width="13" height="14" viewBox="0 0 13 14"><path d="M1 3 H12 V13.5 H1 Z" fill="none" stroke="#5f6368" stroke-width="1.6"/><rect x="1" y="2" width="11" height="2.6" fill="#5f6368"/><rect x="3" y="0" width="1.6" height="3" fill="#5f6368"/><rect x="8.4" y="0" width="1.6" height="3" fill="#5f6368"/><path d="M4 11 L9 6" stroke="#5f6368" stroke-width="1.6"/></svg>
<svg style="left:873px;top:617.5px" width="15" height="13" viewBox="0 0 15 13"><path d="M7.5 1.2 C11.5 1.2 14 3.3 14 6 C14 8.7 11.5 10.8 7.5 10.8 C6.5 10.8 5.6 10.7 4.8 10.4 L1.2 12.2 L2.3 9.3 C1.5 8.4 1 7.3 1 6 C1 3.3 3.5 1.2 7.5 1.2 Z" fill="none" stroke="#5f6368" stroke-width="1.3" stroke-linejoin="round"/></svg>
<svg style="left:913px;top:622.5px" width="14" height="3" viewBox="0 0 14 3"><circle cx="1.5" cy="1.5" r="1.5" fill="#5f6368"/><circle cx="7" cy="1.5" r="1.5" fill="#5f6368"/><circle cx="12.5" cy="1.5" r="1.5" fill="#5f6368"/></svg>
<div class="t " style="left:281px;top:664.73px;font-size:14.5px;color:#42464c;font-weight:400;">Yes</div>
<div class="t " style="left:377px;top:664.73px;font-size:14.5px;color:#42464c;font-weight:400;letter-spacing:0.38px">11/15/2022</div>
<div class="t " style="left:491px;top:664.73px;font-size:14.5px;color:#42464c;font-weight:400;">90 Days</div>
<div class="t " style="left:590px;top:664.73px;font-size:14.5px;color:#42464c;font-weight:400;letter-spacing:0.93px">02/13/2023</div>
<div class="t " style="left:706px;top:664.73px;font-size:14.5px;color:#42464c;font-weight:400;">Normal</div>
<div class="a" style="left:800px;top:662px;width:7px;height:20px;overflow:hidden"><div class="t" style="left:1px;top:2.73px;font-size:14.5px;color:#42464c">F</div></div>
<div class="a" style="left:824px;top:656px;width:32px;height:32px;background:#f6f7f9;border-radius:50%;box-shadow:0 1px 3px rgba(0,0,0,0.10)"></div>
<div class="a" style="left:864px;top:656px;width:32px;height:32px;background:#f6f7f9;border-radius:50%;box-shadow:0 1px 3px rgba(0,0,0,0.10)"></div>
<div class="a" style="left:904px;top:656px;width:32px;height:32px;background:#f6f7f9;border-radius:50%;box-shadow:0 1px 3px rgba(0,0,0,0.10)"></div>
<svg style="left:834px;top:665px" width="13" height="14" viewBox="0 0 13 14"><path d="M1 3 H12 V13.5 H1 Z" fill="none" stroke="#5f6368" stroke-width="1.6"/><rect x="1" y="2" width="11" height="2.6" fill="#5f6368"/><rect x="3" y="0" width="1.6" height="3" fill="#5f6368"/><rect x="8.4" y="0" width="1.6" height="3" fill="#5f6368"/><path d="M4 11 L9 6" stroke="#5f6368" stroke-width="1.6"/></svg>
<svg style="left:873px;top:665.5px" width="15" height="13" viewBox="0 0 15 13"><path d="M7.5 1.2 C11.5 1.2 14 3.3 14 6 C14 8.7 11.5 10.8 7.5 10.8 C6.5 10.8 5.6 10.7 4.8 10.4 L1.2 12.2 L2.3 9.3 C1.5 8.4 1 7.3 1 6 C1 3.3 3.5 1.2 7.5 1.2 Z" fill="none" stroke="#5f6368" stroke-width="1.3" stroke-linejoin="round"/></svg>
<svg style="left:913px;top:670.5px" width="14" height="3" viewBox="0 0 14 3"><circle cx="1.5" cy="1.5" r="1.5" fill="#5f6368"/><circle cx="7" cy="1.5" r="1.5" fill="#5f6368"/><circle cx="12.5" cy="1.5" r="1.5" fill="#5f6368"/></svg>
<div class="t " style="left:281px;top:712.73px;font-size:14.5px;color:#42464c;font-weight:400;">Yes</div>
<div class="t " style="left:377px;top:712.73px;font-size:14.5px;color:#42464c;font-weight:400;letter-spacing:0.66px">10/12/2022</div>
<div class="t " style="left:491px;top:712.73px;font-size:14.5px;color:#42464c;font-weight:400;">59 Days</div>
<div class="t " style="left:590px;top:712.73px;font-size:14.5px;color:#42464c;font-weight:400;letter-spacing:0.66px">12/10/2022</div>
<div class="t " style="left:706px;top:712.73px;font-size:14.5px;color:#42464c;font-weight:400;">Normal</div>
<div class="a" style="left:800px;top:710px;width:7px;height:20px;overflow:hidden"><div class="t" style="left:1px;top:2.73px;font-size:14.5px;color:#42464c">T</div></div>
<div class="a" style="left:824px;top:704px;width:32px;height:32px;background:#f6f7f9;border-radius:50%;box-shadow:0 1px 3px rgba(0,0,0,0.10)"></div>
<div class="a" style="left:864px;top:704px;width:32px;height:32px;background:#f6f7f9;border-radius:50%;box-shadow:0 1px 3px rgba(0,0,0,0.10)"></div>
<div class="a" style="left:904px;top:704px;width:32px;height:32px;background:#f6f7f9;border-radius:50%;box-shadow:0 1px 3px rgba(0,0,0,0.10)"></div>
<svg style="left:834px;top:713px" width="13" height="14" viewBox="0 0 13 14"><path d="M1 3 H12 V13.5 H1 Z" fill="none" stroke="#5f6368" stroke-width="1.6"/><rect x="1" y="2" width="11" height="2.6" fill="#5f6368"/><rect x="3" y="0" width="1.6" height="3" fill="#5f6368"/><rect x="8.4" y="0" width="1.6" height="3" fill="#5f6368"/><path d="M4 11 L9 6" stroke="#5f6368" stroke-width="1.6"/></svg>
<svg style="left:873px;top:713.5px" width="15" height="13" viewBox="0 0 15 13"><path d="M7.5 1.2 C11.5 1.2 14 3.3 14 6 C14 8.7 11.5 10.8 7.5 10.8 C6.5 10.8 5.6 10.7 4.8 10.4 L1.2 12.2 L2.3 9.3 C1.5 8.4 1 7.3 1 6 C1 3.3 3.5 1.2 7.5 1.2 Z" fill="none" stroke="#5f6368" stroke-width="1.3" stroke-linejoin="round"/></svg>
<svg style="left:913px;top:718.5px" width="14" height="3" viewBox="0 0 14 3"><circle cx="1.5" cy="1.5" r="1.5" fill="#5f6368"/><circle cx="7" cy="1.5" r="1.5" fill="#5f6368"/><circle cx="12.5" cy="1.5" r="1.5" fill="#5f6368"/></svg>
<div class="t " style="left:281px;top:760.73px;font-size:14.5px;color:#42464c;font-weight:400;">Yes</div>
<div class="t " style="left:377px;top:760.73px;font-size:14.5px;color:#42464c;font-weight:400;letter-spacing:0.66px">10/12/2022</div>
<div class="t " style="left:491px;top:760.73px;font-size:14.5px;color:#42464c;font-weight:400;">60 Days</div>
<div class="t " style="left:590px;top:760.73px;font-size:14.5px;color:#42464c;font-weight:400;letter-spacing:0.38px">12/11/2022</div>
<div class="t " style="left:706px;top:760.73px;font-size:14.5px;color:#42464c;font-weight:400;">Normal</div>
<div class="a" style="left:800px;top:758px;width:7px;height:20px;overflow:hidden"><div class="t" style="left:1px;top:2.73px;font-size:14.5px;color:#42464c">T</div></div>
<div class="a" style="left:824px;top:752px;width:32px;height:32px;background:#f6f7f9;border-radius:50%;box-shadow:0 1px 3px rgba(0,0,0,0.10)"></div>
<div class="a" style="left:864px;top:752px;width:32px;height:32px;background:#f6f7f9;border-radius:50%;box-shadow:0 1px 3px rgba(0,0,0,0.10)"></div>
<div class="a" style="left:904px;top:752px;width:32px;height:32px;background:#f6f7f9;border-radius:50%;box-shadow:0 1px 3px rgba(0,0,0,0.10)"></div>
<svg style="left:834px;top:761px" width="13" height="14" viewBox="0 0 13 14"><path d="M1 3 H12 V13.5 H1 Z" fill="none" stroke="#5f6368" stroke-width="1.6"/><rect x="1" y="2" width="11" height="2.6" fill="#5f6368"/><rect x="3" y="0" width="1.6" height="3" fill="#5f6368"/><rect x="8.4" y="0" width="1.6" height="3" fill="#5f6368"/><path d="M4 11 L9 6" stroke="#5f6368" stroke-width="1.6"/></svg>
<svg style="left:873px;top:761.5px" width="15" height="13" viewBox="0 0 15 13"><path d="M7.5 1.2 C11.5 1.2 14 3.3 14 6 C14 8.7 11.5 10.8 7.5 10.8 C6.5 10.8 5.6 10.7 4.8 10.4 L1.2 12.2 L2.3 9.3 C1.5 8.4 1 7.3 1 6 C1 3.3 3.5 1.2 7.5 1.2 Z" fill="none" stroke="#5f6368" stroke-width="1.3" stroke-linejoin="round"/></svg>
<svg style="left:913px;top:766.5px" width="14" height="3" viewBox="0 0 14 3"><circle cx="1.5" cy="1.5" r="1.5" fill="#5f6368"/><circle cx="7" cy="1.5" r="1.5" fill="#5f6368"/><circle cx="12.5" cy="1.5" r="1.5" fill="#5f6368"/></svg>
<div class="t " style="left:281px;top:808.73px;font-size:14.5px;color:#42464c;font-weight:400;">Yes</div>
<div class="t " style="left:377px;top:808.73px;font-size:14.5px;color:#42464c;font-weight:400;letter-spacing:0.38px">11/15/2022</div>
<div class="t " style="left:491px;top:808.73px;font-size:14.5px;color:#42464c;font-weight:400;">90 Days</div>
<div class="t " style="left:590px;top:808.73px;font-size:14.5px;color:#42464c;font-weight:400;letter-spacing:0.93px">02/13/2023</div>
<div class="t " style="left:706px;top:808.73px;font-size:14.5px;color:#42464c;font-weight:400;">Normal</div>
<div class="a" style="left:800px;top:806px;width:7px;height:20px;overflow:hidden"><div class="t" style="left:1px;top:2.73px;font-size:14.5px;color:#42464c">S</div></div>
<div class="a" style="left:824px;top:800px;width:32px;height:32px;background:#f6f7f9;border-radius:50%;box-shadow:0 1px 3px rgba(0,0,0,0.10)"></div>
<div class="a" style="left:864px;top:800px;width:32px;height:32px;background:#f6f7f9;border-radius:50%;box-shadow:0 1px 3px rgba(0,0,0,0.10)"></div>
<div class="a" style="left:904px;top:800px;width:32px;height:32px;background:#f6f7f9;border-radius:50%;box-shadow:0 1px 3px rgba(0,0,0,0.10)"></div>
<svg style="left:834px;top:809px" width="13" height="14" viewBox="0 0 13 14"><path d="M1 3 H12 V13.5 H1 Z" fill="none" stroke="#5f6368" stroke-width="1.6"/><rect x="1" y="2" width="11" height="2.6" fill="#5f6368"/><rect x="3" y="0" width="1.6" height="3" fill="#5f6368"/><rect x="8.4" y="0" width="1.6" height="3" fill="#5f6368"/><path d="M4 11 L9 6" stroke="#5f6368" stroke-width="1.6"/></svg>
<svg style="left:873px;top:809.5px" width="15" height="13" viewBox="0 0 15 13"><path d="M7.5 1.2 C11.5 1.2 14 3.3 14 6 C14 8.7 11.5 10.8 7.5 10.8 C6.5 10.8 5.6 10.7 4.8 10.4 L1.2 12.2 L2.3 9.3 C1.5 8.4 1 7.3 1 6 C1 3.3 3.5 1.2 7.5 1.2 Z" fill="none" stroke="#5f6368" stroke-width="1.3" stroke-linejoin="round"/></svg>
<svg style="left:913px;top:814.5px" width="14" height="3" viewBox="0 0 14 3"><circle cx="1.5" cy="1.5" r="1.5" fill="#5f6368"/><circle cx="7" cy="1.5" r="1.5" fill="#5f6368"/><circle cx="12.5" cy="1.5" r="1.5" fill="#5f6368"/></svg>
<div class="t " style="left:281px;top:856.73px;font-size:14.5px;color:#42464c;font-weight:400;">Yes</div>
<div class="t " style="left:377px;top:856.73px;font-size:14.5px;color:#42464c;font-weight:400;letter-spacing:0.66px">10/12/2022</div>
<div class="t " style="left:491px;top:856.73px;font-size:14.5px;color:#42464c;font-weight:400;">59 Days</div>
<div class="t " style="left:590px;top:856.73px;font-size:14.5px;color:#42464c;font-weight:400;letter-spacing:0.66px">12/10/2022</div>
<div class="t " style="left:706px;top:856.73px;font-size:14.5px;color:#42464c;font-weight:400;">Normal</div>
<div class="a" style="left:800px;top:854px;width:7px;height:20px;overflow:hidden"><div class="t" style="left:1px;top:2.73px;font-size:14.5px;color:#42464c">D</div></div>
<div class="a" style="left:824px;top:848px;width:32px;height:32px;background:#f6f7f9;border-radius:50%;box-shadow:0 1px 3px rgba(0,0,0,0.10)"></div>
<div class="a" style="left:864px;top:848px;width:32px;height:32px;background:#f6f7f9;border-radius:50%;box-shadow:0 1px 3px rgba(0,0,0,0.10)"></div>
<div class="a" style="left:904px;top:848px;width:32px;height:32px;background:#f6f7f9;border-radius:50%;box-shadow:0 1px 3px rgba(0,0,0,0.10)"></div>
<svg style="left:834px;top:857px" width="13" height="14" viewBox="0 0 13 14"><path d="M1 3 H12 V13.5 H1 Z" fill="none" stroke="#5f6368" stroke-width="1.6"/><rect x="1" y="2" width="11" height="2.6" fill="#5f6368"/><rect x="3" y="0" width="1.6" height="3" fill="#5f6368"/><rect x="8.4" y="0" width="1.6" height="3" fill="#5f6368"/><path d="M4 11 L9 6" stroke="#5f6368" stroke-width="1.6"/></svg>
<svg style="left:873px;top:857.5px" width="15" height="13" viewBox="0 0 15 13"><path d="M7.5 1.2 C11.5 1.2 14 3.3 14 6 C14 8.7 11.5 10.8 7.5 10.8 C6.5 10.8 5.6 10.7 4.8 10.4 L1.2 12.2 L2.3 9.3 C1.5 8.4 1 7.3 1 6 C1 3.3 3.5 1.2 7.5 1.2 Z" fill="none" stroke="#5f6368" stroke-width="1.3" stroke-linejoin="round"/></svg>
<svg style="left:913px;top:862.5px" width="14" height="3" viewBox="0 0 14 3"><circle cx="1.5" cy="1.5" r="1.5" fill="#5f6368"/><circle cx="7" cy="1.5" r="1.5" fill="#5f6368"/><circle cx="12.5" cy="1.5" r="1.5" fill="#5f6368"/></svg>
<div class="t " style="left:281px;top:904.73px;font-size:14.5px;color:#42464c;font-weight:400;">Yes</div>
<div class="t " style="left:377px;top:904.73px;font-size:14.5px;color:#42464c;font-weight:400;letter-spacing:0.66px">10/12/2022</div>
<div class="t " style="left:491px;top:904.73px;font-size:14.5px;color:#42464c;font-weight:400;">60 Days</div>
<div class="t " style="left:590px;top:904.73px;font-size:14.5px;color:#42464c;font-weight:400;letter-spacing:0.38px">12/11/2022</div>
<div class="t " style="left:706px;top:904.73px;font-size:14.5px;color:#42464c;font-weight:400;">Normal</div>
<div class="a" style="left:800px;top:902px;width:7px;height:20px;overflow:hidden"><div class="t" style="left:1px;top:2.73px;font-size:14.5px;color:#42464c">L</div></div>
<div class="a" style="left:824px;top:896px;width:32px;height:32px;background:#f6f7f9;border-radius:50%;box-shadow:0 1px 3px rgba(0,0,0,0.10)"></div>
<div class="a" style="left:864px;top:896px;width:32px;height:32px;background:#f6f7f9;border-radius:50%;box-shadow:0 1px 3px rgba(0,0,0,0.10)"></div>
<div class="a" style="left:904px;top:896px;width:32px;height:32px;background:#f6f7f9;border-radius:50%;box-shadow:0 1px 3px rgba(0,0,0,0.10)"></div>
<svg style="left:834px;top:905px" width="13" height="14" viewBox="0 0 13 14"><path d="M1 3 H12 V13.5 H1 Z" fill="none" stroke="#5f6368" stroke-width="1.6"/><rect x="1" y="2" width="11" height="2.6" fill="#5f6368"/><rect x="3" y="0" width="1.6" height="3" fill="#5f6368"/><rect x="8.4" y="0" width="1.6" height="3" fill="#5f6368"/><path d="M4 11 L9 6" stroke="#5f6368" stroke-width="1.6"/></svg>
<svg style="left:873px;top:905.5px" width="15" height="13" viewBox="0 0 15 13"><path d="M7.5 1.2 C11.5 1.2 14 3.3 14 6 C14 8.7 11.5 10.8 7.5 10.8 C6.5 10.8 5.6 10.7 4.8 10.4 L1.2 12.2 L2.3 9.3 C1.5 8.4 1 7.3 1 6 C1 3.3 3.5 1.2 7.5 1.2 Z" fill="none" stroke="#5f6368" stroke-width="1.3" stroke-linejoin="round"/></svg>
<svg style="left:913px;top:910.5px" width="14" height="3" viewBox="0 0 14 3"><circle cx="1.5" cy="1.5" r="1.5" fill="#5f6368"/><circle cx="7" cy="1.5" r="1.5" fill="#5f6368"/><circle cx="12.5" cy="1.5" r="1.5" fill="#5f6368"/></svg>
<div class="t " style="left:281px;top:952.73px;font-size:14.5px;color:#42464c;font-weight:400;">Yes</div>
<div class="t " style="left:377px;top:952.73px;font-size:14.5px;color:#42464c;font-weight:400;letter-spacing:0.66px">10/14/2022</div>
<div class="t " style="left:491px;top:952.73px;font-size:14.5px;color:#42464c;font-weight:400;">58 Days</div>
<div class="t " style="left:590px;top:952.73px;font-size:14.5px;color:#42464c;font-weight:400;letter-spacing:0.38px">12/11/2022</div>
<div class="t " style="left:706px;top:952.73px;font-size:14.5px;color:#42464c;font-weight:400;">Normal</div>
<div class="a" style="left:800px;top:950px;width:7px;height:20px;overflow:hidden"><div class="t" style="left:1px;top:2.73px;font-size:14.5px;color:#42464c">J</div></div>
<div class="a" style="left:824px;top:944px;width:32px;height:32px;background:#f6f7f9;border-radius:50%;box-shadow:0 1px 3px rgba(0,0,0,0.10)"></div>
<div class="a" style="left:864px;top:944px;width:32px;height:32px;background:#f6f7f9;border-radius:50%;box-shadow:0 1px 3px rgba(0,0,0,0.10)"></div>
<div class="a" style="left:904px;top:944px;width:32px;height:32px;background:#f6f7f9;border-radius:50%;box-shadow:0 1px 3px rgba(0,0,0,0.10)"></div>
<svg style="left:834px;top:953px" width="13" height="14" viewBox="0 0 13 14"><path d="M1 3 H12 V13.5 H1 Z" fill="none" stroke="#5f6368" stroke-width="1.6"/><rect x="1" y="2" width="11" height="2.6" fill="#5f6368"/><rect x="3" y="0" width="1.6" height="3" fill="#5f6368"/><rect x="8.4" y="0" width="1.6" height="3" fill="#5f6368"/><path d="M4 11 L9 6" stroke="#5f6368" stroke-width="1.6"/></svg>
<svg style="left:873px;top:953.5px" width="15" height="13" viewBox="0 0 15 13"><path d="M7.5 1.2 C11.5 1.2 14 3.3 14 6 C14 8.7 11.5 10.8 7.5 10.8 C6.5 10.8 5.6 10.7 4.8 10.4 L1.2 12.2 L2.3 9.3 C1.5 8.4 1 7.3 1 6 C1 3.3 3.5 1.2 7.5 1.2 Z" fill="none" stroke="#5f6368" stroke-width="1.3" stroke-linejoin="round"/></svg>
<svg style="left:913px;top:958.5px" width="14" height="3" viewBox="0 0 14 3"><circle cx="1.5" cy="1.5" r="1.5" fill="#5f6368"/><circle cx="7" cy="1.5" r="1.5" fill="#5f6368"/><circle cx="12.5" cy="1.5" r="1.5" fill="#5f6368"/></svg>
<div class="t " style="left:281px;top:1000.73px;font-size:14.5px;color:#42464c;font-weight:400;">Yes</div>
<div class="t " style="left:377px;top:1000.73px;font-size:14.5px;color:#42464c;font-weight:400;letter-spacing:0.66px">11/27/2022</div>
<div class="t " style="left:491px;top:1000.73px;font-size:14.5px;color:#42464c;font-weight:400;">78 Days</div>
<div class="t " style="left:590px;top:1000.73px;font-size:14.5px;color:#42464c;font-weight:400;letter-spacing:0.93px">02/13/2023</div>
<div class="t " style="left:706px;top:1000.73px;font-size:14.5px;color:#42464c;font-weight:400;">Normal</div>
<div class="a" style="left:800px;top:998px;width:7px;height:20px;overflow:hidden"><div class="t" style="left:1px;top:2.73px;font-size:14.5px;color:#42464c">D</div></div>
<div class="a" style="left:824px;top:992px;width:32px;height:32px;background:#f6f7f9;border-radius:50%;box-shadow:0 1px 3px rgba(0,0,0,0.10)"></div>
<div class="a" style="left:864px;top:992px;width:32px;height:32px;background:#f6f7f9;border-radius:50%;box-shadow:0 1px 3px rgba(0,0,0,0.10)"></div>
<div class="a" style="left:904px;top:992px;width:32px;height:32px;background:#f6f7f9;border-radius:50%;box-shadow:0 1px 3px rgba(0,0,0,0.10)"></div>
<svg style="left:834px;top:1001px" width="13" height="14" viewBox="0 0 13 14"><path d="M1 3 H12 V13.5 H1 Z" fill="none" stroke="#5f6368" stroke-width="1.6"/><rect x="1" y="2" width="11" height="2.6" fill="#5f6368"/><rect x="3" y="0" width="1.6" height="3" fill="#5f6368"/><rect x="8.4" y="0" width="1.6" height="3" fill="#5f6368"/><path d="M4 11 L9 6" stroke="#5f6368" stroke-width="1.6"/></svg>
<svg style="left:873px;top:1001.5px" width="15" height="13" viewBox="0 0 15 13"><path d="M7.5 1.2 C11.5 1.2 14 3.3 14 6 C14 8.7 11.5 10.8 7.5 10.8 C6.5 10.8 5.6 10.7 4.8 10.4 L1.2 12.2 L2.3 9.3 C1.5 8.4 1 7.3 1 6 C1 3.3 3.5 1.2 7.5 1.2 Z" fill="none" stroke="#5f6368" stroke-width="1.3" stroke-linejoin="round"/></svg>
<svg style="left:913px;top:1006.5px" width="14" height="3" viewBox="0 0 14 3"><circle cx="1.5" cy="1.5" r="1.5" fill="#5f6368"/><circle cx="7" cy="1.5" r="1.5" fill="#5f6368"/><circle cx="12.5" cy="1.5" r="1.5" fill="#5f6368"/></svg>
<div class="t " style="left:281px;top:1048.73px;font-size:14.5px;color:#42464c;font-weight:400;">Yes</div>
<div class="t " style="left:377px;top:1048.73px;font-size:14.5px;color:#42464c;font-weight:400;letter-spacing:0.93px">12/06/2022</div>
<div class="t " style="left:491px;top:1048.73px;font-size:14.5px;color:#42464c;font-weight:400;">90+ Days</div>
<div class="t " style="left:590px;top:1048.73px;font-size:14.5px;color:#42464c;font-weight:400;letter-spacing:1.21px">05/04/2023</div>
<div class="t " style="left:706px;top:1048.73px;font-size:14.5px;color:#42464c;font-weight:400;">Normal</div>
<div class="a" style="left:800px;top:1046px;width:7px;height:20px;overflow:hidden"><div class="t" style="left:1px;top:2.73px;font-size:14.5px;color:#42464c">K</div></div>
<div class="a" style="left:824px;top:1040px;width:32px;height:32px;background:#f6f7f9;border-radius:50%;box-shadow:0 1px 3px rgba(0,0,0,0.10)"></div>
<div class="a" style="left:864px;top:1040px;width:32px;height:32px;background:#f6f7f9;border-radius:50%;box-shadow:0 1px 3px rgba(0,0,0,0.10)"></div>
<div class="a" style="left:904px;top:1040px;width:32px;height:32px;background:#f6f7f9;border-radius:50%;box-shadow:0 1px 3px rgba(0,0,0,0.10)"></div>
<svg style="left:834px;top:1049px" width="13" height="14" viewBox="0 0 13 14"><path d="M1 3 H12 V13.5 H1 Z" fill="none" stroke="#5f6368" stroke-width="1.6"/><rect x="1" y="2" width="11" height="2.6" fill="#5f6368"/><rect x="3" y="0" width="1.6" height="3" fill="#5f6368"/><rect x="8.4" y="0" width="1.6" height="3" fill="#5f6368"/><path d="M4 11 L9 6" stroke="#5f6368" stroke-width="1.6"/></svg>
<svg style="left:873px;top:1049.5px" width="15" height="13" viewBox="0 0 15 13"><path d="M7.5 1.2 C11.5 1.2 14 3.3 14 6 C14 8.7 11.5 10.8 7.5 10.8 C6.5 10.8 5.6 10.7 4.8 10.4 L1.2 12.2 L2.3 9.3 C1.5 8.4 1 7.3 1 6 C1 3.3 3.5 1.2 7.5 1.2 Z" fill="none" stroke="#5f6368" stroke-width="1.3" stroke-linejoin="round"/></svg>
<svg style="left:913px;top:1054.5px" width="14" height="3" viewBox="0 0 14 3"><circle cx="1.5" cy="1.5" r="1.5" fill="#5f6368"/><circle cx="7" cy="1.5" r="1.5" fill="#5f6368"/><circle cx="12.5" cy="1.5" r="1.5" fill="#5f6368"/></svg>
<div class="a" style="left:807px;top:134px;width:1px;height:945px;background:#d0d3d9"></div>
<div class="a" style="left:261px;top:1128px;width:212px;height:4px;background:#b7b9be;border-radius:2px"></div>
<div class="a" style="left:257px;top:1136px;width:711px;height:2px;background:linear-gradient(#d0d3d8,#eceef2)"></div>
<div class="a" style="left:257px;top:1137px;width:711px;height:49px;background:#f7f8fa;border-radius:0 0 6px 6px"></div>
<div class="t " style="left:273px;top:1146.15px;font-size:14px;color:#6e7278;font-weight:400;">Showing</div>
<div class="t " style="left:273px;top:1164.15px;font-size:14px;color:#3b3f45;font-weight:400;">1 - 18 of 18</div>
<svg style="left:515px;top:1154px" width="11" height="14" viewBox="0 0 11 14"><rect x="0" y="0" width="2.4" height="14" fill="#6b6d76"/><polygon points="10.5,0 10.5,14 2.4,7" fill="#6b6d76"/></svg>
<svg style="left:545px;top:1153px" width="9" height="15" viewBox="0 0 9 15"><path d="M8 1 L1.5 7.5 L8 14" fill="none" stroke="#6e7278" stroke-width="1.4"/></svg>
<div class="a" style="left:569px;top:1148px;width:28px;height:26px;border:2px solid #1577c0;border-radius:6px"></div>
<div class="t " style="left:579px;top:1154.15px;font-size:14px;color:#5b5f66;font-weight:400;">1</div>
<svg style="left:611px;top:1153px" width="9" height="15" viewBox="0 0 9 15"><path d="M1 1 L7.5 7.5 L1 14" fill="none" stroke="#6e7278" stroke-width="1.4"/></svg>
<svg style="left:641px;top:1154px" width="11" height="14" viewBox="0 0 11 14"><rect x="8.6" y="0" width="2.4" height="14" fill="#6b6d76"/><polygon points="0.5,0 0.5,14 8.6,7" fill="#6b6d76"/></svg>
<div class="t " style="left:837px;top:1154.00px;font-size:13px;color:#6e7278;font-weight:400;">Per page</div>
<div class="a" style="left:897px;top:1144px;width:55px;height:33px;border:1px solid #d3d5da;border-radius:5px;background:#fff"></div>
<div class="t " style="left:909px;top:1153.30px;font-size:15px;color:#3b3f45;font-weight:400;">25</div>
<svg style="left:930px;top:1157px" width="13" height="8" viewBox="0 0 13 8"><path d="M1 1 L6.5 6.5 L12 1" fill="none" stroke="#3b3f45" stroke-width="1.6"/></svg>
<div class="a" style="left:985px;top:134px;width:958px;height:48px;background:#fff;border-radius:6px;box-shadow:0 1px 2px rgba(0,0,0,0.10)"></div>
<div class="a" style="left:993px;top:142px;width:32px;height:32px;background:#1565d8;border-radius:50%"></div>
<svg style="left:1000px;top:150px" width="18" height="16" viewBox="0 0 18 16"><rect x="0" y="0" width="18" height="16" rx="1.5" fill="#fff"/><circle cx="4.5" cy="4.7" r="1.1" fill="#1565d8"/><circle cx="4.5" cy="8" r="1.1" fill="#1565d8"/><circle cx="4.5" cy="11.3" r="1.1" fill="#1565d8"/><rect x="7" y="4" width="8" height="1.5" fill="#1565d8"/><rect x="7" y="7.3" width="8" height="1.5" fill="#1565d8"/><rect x="7" y="10.6" width="8" height="1.5" fill="#1565d8"/></svg>
<div class="t " style="left:1033px;top:150.03px;font-size:16.5px;color:#2f3338;font-weight:400;">Worklist Action</div>
<div class="a" style="left:1467px;top:143px;width:127px;height:30px;background:#1b7fc6;border-radius:4px"></div>
<svg style="left:1484px;top:150px" width="12" height="15" viewBox="0 0 12 15"><rect x="0" y="2.5" width="12" height="12.5" rx="1" fill="#fff"/><rect x="2" y="0" width="2" height="3" fill="#fff"/><rect x="8" y="0" width="2" height="3" fill="#fff"/><rect x="0" y="5" width="12" height="1" fill="#1b7fc6"/><path d="M3.5 12.5 L8 8" stroke="#1b7fc6" stroke-width="1.5"/></svg>
<div class="t " style="left:1500px;top:151.73px;font-size:14.5px;color:#fff;font-weight:400;-webkit-text-stroke:0.3px #fff;letter-spacing:0.01em">Reschedule</div>
<div class="a" style="left:1602px;top:143px;width:146px;height:30px;background:#1b7fc6;border-radius:4px"></div>
<svg style="left:1619px;top:151px" width="15" height="13" viewBox="0 0 15 13"><ellipse cx="7.5" cy="5.8" rx="7" ry="5.5" fill="#fff"/><path d="M1.5 8.5 L0.5 12.5 L5 10.5 Z" fill="#fff"/></svg>
<div class="t " style="left:1637px;top:151.73px;font-size:14.5px;color:#fff;font-weight:400;-webkit-text-stroke:0.3px #fff;letter-spacing:0.01em">SMS Message</div>
<div class="a" style="left:1756px;top:142px;width:171px;height:32px;border:1px solid #1b7fc6;border-radius:4px;background:#fff"></div>
<div class="a" style="left:1773px;top:151px;width:14px;height:14px;background:#1b7fc6;border-radius:50%"></div>
<div class="a" style="left:1776px;top:157px;width:8px;height:2px;background:#fff"></div>
<div class="t " style="left:1795px;top:151.84px;font-size:12px;color:#1b7fc6;font-weight:400;">Remove from Waitlist</div>
<div class="a" style="left:985px;top:190px;width:642px;height:210px;background:#fff;border-radius:6px;box-shadow:0 1px 2px rgba(0,0,0,0.10)"></div>
<div class="a" style="left:997px;top:202px;width:181px;height:39px;border:1px solid #d3d5da;border-radius:20px;background:#fff;box-shadow:0 1px 2px rgba(0,0,0,0.10)"></div>
<div class="a" style="left:1002px;top:206px;width:32px;height:32px;background:#4fbf7f;border-radius:50%"></div>
<div class="t " style="left:1012px;top:215.61px;font-size:17px;color:#fff;font-weight:700;">$</div>
<div class="t " style="left:1042px;top:207.42px;font-size:12.5px;color:#7a7e85;font-weight:400;letter-spacing:0.035em">Total Amount Owed</div>
<div class="t " style="left:1042px;top:221.65px;font-size:14px;color:#2f3338;font-weight:400;">0.00</div>
<div class="a" style="left:997px;top:254px;width:618px;height:136px;border:1px solid #cfd2d8;border-top:4px solid #e3ac00;border-radius:4px;background:#fff"></div>
<svg style="left:1012px;top:281px" width="13" height="9" viewBox="0 0 13 9"><path d="M1.5 1.5 L6.5 6.5 L11.5 1.5" fill="none" stroke="#1b6fc0" stroke-width="2"/></svg>
<div class="a" style="left:1034px;top:270px;width:32px;height:32px;background:#e3ac00;border-radius:50%"></div>
<div class="a" style="left:1048px;top:277px;width:4px;height:12px;background:#fff;border-radius:2px"></div>
<div class="a" style="left:1048px;top:291.5px;width:4px;height:4px;background:#fff;border-radius:50%"></div>
<div class="t " style="left:1074px;top:278.53px;font-size:16.5px;color:#2f3338;font-weight:400;">Alerts (1)</div>
<div class="a" style="left:1010px;top:314px;width:592px;height:1px;background:#d3d5da"></div>
<div class="a" style="left:1010px;top:331px;width:592px;height:46px;border:1px solid #d93a34;border-radius:4px;background:#fff3cd"></div>
<div class="t " style="left:1019px;top:337.73px;font-size:14.5px;color:#c9302c;font-weight:400;">CPT Alert: Nothing to eat or drink after midnight the night prior to the test or at least</div>
<div class="t " style="left:1019px;top:355.73px;font-size:14.5px;color:#c9302c;font-weight:400;">4 hours prior. If scheduled in the afternoon, may have a light breakfast.</div>
<div class="a" style="left:985px;top:414px;width:642px;height:216px;background:#fff;border-radius:6px;box-shadow:0 1px 2px rgba(0,0,0,0.10)"></div>
<div class="a" style="left:997px;top:431px;width:32px;height:32px;background:#1565d8;border-radius:50%"></div>
<svg style="left:1006px;top:438px" width="14" height="17" viewBox="0 0 14 17"><rect x="0" y="2" width="14" height="15" rx="1.5" fill="#fff"/><rect x="4" y="0" width="6" height="4" rx="1" fill="#fff" stroke="#1565d8" stroke-width="1"/><rect x="3" y="7" width="1.5" height="1.5" fill="#1565d8"/><rect x="6" y="7" width="5" height="1.5" fill="#1565d8"/><rect x="3" y="10" width="1.5" height="1.5" fill="#1565d8"/><rect x="6" y="10" width="5" height="1.5" fill="#1565d8"/><rect x="3" y="13" width="1.5" height="1.5" fill="#1565d8"/><rect x="6" y="13" width="5" height="1.5" fill="#1565d8"/></svg>
<div class="t " style="left:1037px;top:427.03px;font-size:16.5px;color:#5b5f66;font-weight:400;">02/13/2023</div>
<div class="t " style="left:1037px;top:448.53px;font-size:16.5px;color:#5b5f66;font-weight:400;">Miami - Aventura</div>
<div class="a" style="left:1530px;top:435px;width:77px;height:24px;background:#d62220;border-radius:12px"></div>
<svg style="left:1538px;top:438px" width="19" height="17" viewBox="0 0 19 17"><path d="M9.5 1.5 L18 16 H1 Z" fill="none" stroke="#fff" stroke-width="1.8" stroke-linejoin="round"/><rect x="8.7" y="6" width="1.7" height="5.5" fill="#fff"/><rect x="8.7" y="12.5" width="1.7" height="1.7" fill="#fff"/></svg>
<div class="t " style="left:1561px;top:440.03px;font-size:16.5px;color:#fff;font-weight:400;-webkit-text-stroke:0.6px #fff;letter-spacing:0.01em">STAT</div>
<div class="a" style="left:997px;top:476px;width:618px;height:1px;background:#d3d5da"></div>
<div class="a" style="left:997px;top:489px;width:618px;height:129px;border:1px solid #cfd2d8;border-top:4px solid #1565d8;border-radius:4px;background:#fff"></div>
<svg style="left:1016px;top:516px" width="13" height="9" viewBox="0 0 13 9"><path d="M1.5 1.5 L6.5 6.5 L11.5 1.5" fill="none" stroke="#1b6fc0" stroke-width="2"/></svg>
<div class="a" style="left:1042px;top:509px;width:42px;height:24px;background:#1565d8;border-radius:4px"></div>
<div class="t " style="left:1049px;top:511.92px;font-size:19px;color:#fff;font-weight:700;">CT</div>
<div class="t " style="left:1092px;top:502.84px;font-size:12px;color:#7a7e85;font-weight:400;">Miami CT</div>
<div class="t " style="left:1092px;top:519.73px;font-size:14.5px;color:#5b5f66;font-weight:400;">11:00 AM</div>
<div class="a" style="left:1160px;top:524px;width:6px;height:6px;background:#5b5f66;border-radius:50%"></div>
<div class="t " style="left:1174px;top:519.30px;font-size:15px;color:#5b5f66;font-weight:400;">30 Min</div>
<div class="a" style="left:1354px;top:507px;width:200px;height:24px;border:1.5px solid #1d5fa0;border-radius:4px;background:#fff"></div>
<div class="a" style="left:1363px;top:516px;width:7px;height:7px;background:#1d4f8a;border-radius:50%"></div>
<div class="t " style="left:1380px;top:512.30px;font-size:15px;color:#5b5f66;font-weight:400;">New</div>
<svg style="left:1537px;top:517px" width="11" height="7" viewBox="0 0 11 7"><path d="M1 1 L5.5 5.5 L10 1" fill="none" stroke="#5b5f66" stroke-width="1.5"/></svg>
<div class="a" style="left:1584.8px;top:515.0px;width:2.6px;height:2.6px;background:#1d5fa0;border-radius:50%"></div>
<div class="a" style="left:1584.8px;top:519.5px;width:2.6px;height:2.6px;background:#1d5fa0;border-radius:50%"></div>
<div class="a" style="left:1584.8px;top:524.0px;width:2.6px;height:2.6px;background:#1d5fa0;border-radius:50%"></div>
<div class="a" style="left:1010px;top:549px;width:592px;height:1px;background:#d3d5da"></div>
<div class="a" style="left:1010px;top:562px;width:592px;height:43px;border:1px solid #d3d5da;border-bottom:2px solid #d3d5da;border-radius:3px;background:#f7f8fa"></div>
<div class="t " style="left:1027px;top:576.15px;font-size:14px;color:#2f3338;font-weight:400;-webkit-text-stroke:0.2px #2f3338;letter-spacing:0.025em">CT HEAD WITHOUT (70450)</div>
<div class="a" style="left:985px;top:642px;width:642px;height:367px;background:#fff;border-radius:6px;box-shadow:0 1px 2px rgba(0,0,0,0.10)"></div>
<div class="a" style="left:997px;top:654px;width:32px;height:32px;background:#e86464;border-radius:50%"></div>
<svg style="left:1004px;top:659px" width="18" height="20" viewBox="0 0 18 20"><circle cx="9" cy="5" r="4.2" fill="#fff"/><path d="M1 19 V15.5 Q1 11 6 11 H12 Q17 11 17 15.5 V19 Z" fill="#fff"/><circle cx="6" cy="16" r="1.3" fill="none" stroke="#e86464" stroke-width="1"/><path d="M11 17 Q11 14.5 12.5 14.5 Q14 14.5 14 17" fill="none" stroke="#e86464" stroke-width="1"/></svg>
<div class="t " style="left:1037px;top:660.84px;font-size:18.5px;color:#2f3338;font-weight:400;">Referrals</div>
<svg style="left:1551px;top:663px" width="14" height="14" viewBox="0 0 14 14"><path d="M7 1 V13 M1 7 H13" stroke="#1b7fc6" stroke-width="2"/></svg>
<div class="a" style="left:1578px;top:662px;width:1px;height:16px;background:#d3d5da"></div>
<svg style="left:1590px;top:662px" width="17" height="17" viewBox="0 0 17 17"><path d="M7 2.5 H3 Q1.5 2.5 1.5 4 V14 Q1.5 15.5 3 15.5 H13 Q14.5 15.5 14.5 14 V10" fill="none" stroke="#1b7fc6" stroke-width="1.8"/><path d="M8 9 L15.5 1.5 M10 1.5 H15.5 V7" fill="none" stroke="#1b7fc6" stroke-width="1.8"/></svg>
<div class="a" style="left:997px;top:698px;width:618px;height:1px;background:#d3d5da"></div>
<div class="a" style="left:997px;top:712px;width:618px;height:287px;border:1px solid #cfd2d8;border-top:4px solid #e55a5a;border-radius:4px;background:#fff"></div>
<div class="t " style="left:1010px;top:732.46px;font-size:16px;color:#2f3338;font-weight:400;letter-spacing:0">RICHARD EMMETT</div>
<div class="t " style="left:1010px;top:753.73px;font-size:14.5px;color:#6e7278;font-weight:400;">Referring Physician</div>
<svg style="left:1495px;top:741px" width="16" height="14" viewBox="0 0 16 14"><path d="M1 4.5 H14 M10.5 1 L14.5 4.5 L10.5 8 M15 9.5 H2 M5.5 6 L1.5 9.5 L5.5 13" fill="none" stroke="#1b7fc6" stroke-width="1.6"/></svg>
<div class="a" style="left:1524px;top:740px;width:1px;height:16px;background:#d3d5da"></div>
<svg style="left:1537px;top:741px" width="16" height="16" viewBox="0 0 16 16"><path d="M1.5 1.5 H14.5 V11.5 H6 L2.5 14.5 V11.5 H1.5 Z" fill="none" stroke="#1b7fc6" stroke-width="1.5" stroke-linejoin="round"/><path d="M4 5 H12 M4 8 H10" stroke="#1b7fc6" stroke-width="1.3"/></svg>
<div class="a" style="left:1545px;top:733px;width:11px;height:11px;background:#d62220;border-radius:50%"></div>
<div class="t " style="left:1548px;top:734.38px;font-size:9px;color:#fff;font-weight:700;">2</div>
<div class="a" style="left:1565px;top:740px;width:1px;height:16px;background:#d3d5da"></div>
<svg style="left:1579px;top:740px" width="14" height="16" viewBox="0 0 14 16"><path d="M1 3.5 H13 M5 3.5 V1.5 H9 V3.5" fill="none" stroke="#d62220" stroke-width="1.5"/><path d="M2.5 3.5 L3.2 15 H10.8 L11.5 3.5" fill="none" stroke="#d62220" stroke-width="1.5"/><path d="M5.5 6 V12.5 M8.5 6 V12.5" stroke="#d62220" stroke-width="1.4"/></svg>
<div class="a" style="left:1010px;top:783px;width:592px;height:1px;background:#d3d5da"></div>
<div class="a" style="left:1010px;top:796px;width:592px;height:191px;border:1px solid #d3d5da;border-radius:3px;background:#fff"></div>
<div class="a" style="left:1011px;top:797px;width:590px;height:41px;background:#f7f8fa;border-bottom:1px solid #d3d5da"></div>
<div class="t " style="left:1023px;top:810.15px;font-size:14px;color:#2f3338;font-weight:400;-webkit-text-stroke:0.2px #2f3338;letter-spacing:0">RICHARD EMMETT, MD</div>
<div class="t " style="left:1023px;top:851.50px;font-size:13px;color:#7a7e85;font-weight:400;">Address</div>
<div class="t " style="left:1023px;top:870.65px;font-size:14px;color:#2f3338;font-weight:400;letter-spacing:0">133 ALLIED DRIVE</div>
<div class="t " style="left:1023px;top:888.65px;font-size:14px;color:#2f3338;font-weight:400;letter-spacing:0">FORT LAUDERDALE, FL 33351</div>
<div class="t " style="left:1314px;top:851.50px;font-size:13px;color:#7a7e85;font-weight:400;">Office Phone</div>
<div class="t " style="left:1314px;top:870.23px;font-size:14.5px;color:#2f3338;font-weight:400;">(954) 519-0654</div>
<div class="t " style="left:1314px;top:895.50px;font-size:13px;color:#7a7e85;font-weight:400;">Fax</div>
<div class="t " style="left:1314px;top:914.23px;font-size:14.5px;color:#2f3338;font-weight:400;">(954) 519-0655</div>
<div class="t " style="left:1314px;top:939.50px;font-size:13px;color:#7a7e85;font-weight:400;">NPI</div>
<div class="t " style="left:1314px;top:958.23px;font-size:14.5px;color:#2f3338;font-weight:400;">7833245062</div>
<div class="t " style="left:1464px;top:851.50px;font-size:13px;color:#7a7e85;font-weight:400;">Referring ID</div>
<div class="t " style="left:1464px;top:870.23px;font-size:14.5px;color:#2f3338;font-weight:400;">IDS 1</div>
<div class="t " style="left:1464px;top:895.50px;font-size:13px;color:#7a7e85;font-weight:400;">Client Code</div>
<div class="t " style="left:1464px;top:914.23px;font-size:14.5px;color:#2f3338;font-weight:400;">--</div>
<div class="t " style="left:1464px;top:939.50px;font-size:13px;color:#7a7e85;font-weight:400;">Tax ID</div>
<div class="t " style="left:1464px;top:958.23px;font-size:14.5px;color:#2f3338;font-weight:400;">--</div>
<div class="a" style="left:985px;top:1024px;width:642px;height:162px;overflow:hidden;border-radius:6px 6px 0 0">
<div class="a" style="left:0;top:0;width:642px;height:300px;background:#fff;border-radius:6px"></div>
<div class="a" style="left:12px;top:12px;width:32px;height:32px;background:#33d1b0;border-radius:50%"></div>
<svg style="left:21px;top:19px" width="14" height="17" viewBox="0 0 14 17"><rect x="0" y="2" width="14" height="15" rx="1.5" fill="#fff"/><rect x="4" y="0" width="6" height="4" rx="1" fill="#fff" stroke="#33d1b0" stroke-width="1"/><rect x="3" y="7" width="1.5" height="1.5" fill="#33d1b0"/><rect x="6" y="7" width="5" height="1.5" fill="#33d1b0"/><rect x="3" y="10" width="1.5" height="1.5" fill="#33d1b0"/><rect x="6" y="10" width="5" height="1.5" fill="#33d1b0"/><rect x="3" y="13" width="1.5" height="1.5" fill="#33d1b0"/><rect x="6" y="13" width="5" height="1.5" fill="#33d1b0"/></svg>
<div class="t " style="left:52px;top:18.84px;font-size:18.5px;color:#2f3338;font-weight:400;">Diagnosis</div>
</div>
<svg style="left:1551px;top:1045px" width="14" height="14" viewBox="0 0 14 14"><path d="M7 1 V13 M1 7 H13" stroke="#1b7fc6" stroke-width="2"/></svg>
<div class="a" style="left:1578px;top:1044px;width:1px;height:16px;background:#d3d5da"></div>
<svg style="left:1590px;top:1044px" width="17" height="17" viewBox="0 0 17 17"><path d="M7 2.5 H3 Q1.5 2.5 1.5 4 V14 Q1.5 15.5 3 15.5 H13 Q14.5 15.5 14.5 14 V10" fill="none" stroke="#1b7fc6" stroke-width="1.8"/><path d="M8 9 L15.5 1.5 M10 1.5 H15.5 V7" fill="none" stroke="#1b7fc6" stroke-width="1.8"/></svg>
<div class="a" style="left:997px;top:1076px;width:618px;height:1px;background:#d3d5da"></div>
<div class="a" style="left:997px;top:1090px;width:618px;height:96px;overflow:hidden">
<div class="a" style="left:0px;top:0px;width:618px;height:200px;border:1px solid #cfd2d8;border-top:4px solid #33d1b0;border-radius:4px;background:#fff"></div>
<div class="a" style="left:13px;top:16px;width:592px;height:200px;border:1px solid #d3d5da;border-radius:5px;background:#fff"></div>
<div class="a" style="left:14px;top:17px;width:590px;height:46px;background:#f7f8fa;border-bottom:1px solid #d3d5da;border-radius:5px 5px 0 0"></div>
<div class="a" style="left:388px;top:17px;width:1px;height:46px;background:#d3d5da"></div>
<div class="a" style="left:480px;top:17px;width:1px;height:46px;background:#d3d5da"></div>
<div class="a" style="left:494px;top:17px;width:1px;height:200px;background:#d3d5da"></div>
<div class="t " style="left:22px;top:32.73px;font-size:14.5px;color:#6b6f76;font-weight:400;">Diagnosis</div>
<div class="t " style="left:404px;top:32.73px;font-size:14.5px;color:#6b6f76;font-weight:400;">Code</div>
<div class="t " style="left:527px;top:32.73px;font-size:14.5px;color:#6b6f76;font-weight:400;">Actions</div>
<svg style="left:357px;top:29px" width="14" height="19" viewBox="0 0 14 19"><path d="M2 7 L7 2 L12 7 M2 12 L7 17 L12 12" fill="none" stroke="#7d8087" stroke-width="2.2"/></svg>
<svg style="left:450px;top:29px" width="14" height="19" viewBox="0 0 14 19"><path d="M2 7 L7 2 L12 7 M2 12 L7 17 L12 12" fill="none" stroke="#7d8087" stroke-width="2.2"/></svg>
<div class="t " style="left:38px;top:87.73px;font-size:14.5px;color:#2f3338;font-weight:400;letter-spacing:0.05em">Chronic tension-type headache, not intractable</div>
<div class="t " style="left:402px;top:87.73px;font-size:14.5px;color:#2f3338;font-weight:400;">G44.229</div>
<div class="a" style="left:510px;top:80px;width:32px;height:32px;background:#f6f7f9;border-radius:50%;box-shadow:0 1px 3px rgba(0,0,0,0.10)"></div>
<div class="a" style="left:549px;top:80px;width:32px;height:32px;background:#f6f7f9;border-radius:50%;box-shadow:0 1px 3px rgba(0,0,0,0.10)"></div>
<svg style="left:520px;top:88px" width="12" height="12" viewBox="0 0 12 12"><path d="M1.5 10.5 L2 8 L8.5 1.5 L10.5 3.5 L4 10 Z" fill="none" stroke="#5f6368" stroke-width="1.3"/></svg>
<svg style="left:559px;top:87px" width="12" height="14" viewBox="0 0 12 14"><path d="M1 3 H11 M4 3 V1.2 H8 V3" fill="none" stroke="#d62220" stroke-width="1.3"/><path d="M2.2 3 L2.8 13 H9.2 L9.8 3" fill="none" stroke="#d62220" stroke-width="1.3"/><path d="M4.8 5.5 V11 M7.2 5.5 V11" stroke="#d62220" stroke-width="1.2"/></svg>
</div>
<div class="a" style="left:1630px;top:194px;width:5px;height:478px;background:#6e7079;border-radius:3px"></div>
<div class="a" style="left:1643px;top:190px;width:300px;height:996px;background:#fff;border-radius:6px;box-shadow:0 1px 2px rgba(0,0,0,0.10)"></div>
<div class="a" style="left:1655px;top:202px;width:276px;height:173px;border-radius:9px;border:1px solid #ddd8c6;overflow:hidden;background:#f3efe3">
<div class="a" style="left:100px;top:0;width:176px;height:173px;background:radial-gradient(ellipse 90px 80px at 150px 60px,rgba(214,226,238,0.9) 0%,rgba(240,234,214,0) 100%)"></div>
<div class="a" style="left:150px;top:30px;width:110px;height:70px;border-radius:50%;border:1px dashed rgba(120,140,190,0.45)"></div>
<div class="a" style="left:170px;top:45px;width:70px;height:45px;border-radius:50%;background:rgba(245,230,190,0.6)"></div>
<div class="t" style="left:13px;top:13px;font-family:'Liberation Serif',serif;font-style:italic;font-weight:700;font-size:22px;color:#27304f;letter-spacing:-0.5px">Lo<span style="color:#5a2a3a">uisi</span>ana</div>
<div class="t" style="left:39px;top:9px;font-size:4.5px;font-weight:700;color:#444;letter-spacing:0">Don't Drink and Drive</div>
<div class="t" style="left:39px;top:35px;font-size:4.5px;font-weight:700;color:#444;letter-spacing:0">Don't Litter Louisiana</div>
<div class="t" style="left:150px;top:10px;font-size:8px;font-weight:700;color:#3f6aa8;letter-spacing:0.6px">PERSONAL</div>
<div class="t" style="left:129px;top:18px;font-size:8px;font-weight:700;color:#3f6aa8;letter-spacing:0.5px">DRIVER'S LICENSE</div>
<div class="t" style="left:227px;top:12px;font-size:5px;font-weight:700;color:#b03050;letter-spacing:0">DUP</div>
<div class="a" style="left:244px;top:9px;width:20px;height:20px;border-radius:50%;background:#dcb640"></div>
<div class="t" style="left:249px;top:11px;font-size:13px;color:#f3e6b8;letter-spacing:0">&#9733;</div>
<div class="a" style="left:13px;top:41px;width:81px;height:108px;background:#3fa5a8"></div>
<div class="a" style="left:13px;top:122px;width:81px;height:27px;border-radius:34px 34px 0 0;background:#5d6c8f"></div>
<div class="a" style="left:42px;top:112px;width:26px;height:16px;border-radius:0 0 13px 13px;background:#a8735a"></div>
<div class="a" style="left:28px;top:50px;width:54px;height:80px;border-radius:50% 50% 46% 46%;background:radial-gradient(ellipse 30px 40px at 26px 36px,#e2b49a 0%,#c8917a 55%,#9c6a54 100%)"></div>
<div class="a" style="left:25px;top:44px;width:60px;height:28px;border-radius:30px 30px 10px 14px;background:#2a201c"></div>
<div class="a" style="left:24px;top:58px;width:8px;height:28px;border-radius:4px 2px 4px 4px;background:#2a201c"></div>
<div class="a" style="left:78px;top:58px;width:8px;height:30px;border-radius:2px 4px 4px 4px;background:#2a201c"></div>
<div class="a" style="left:36px;top:84px;width:11px;height:3px;border-radius:2px;background:#3a2a24"></div>
<div class="a" style="left:60px;top:84px;width:11px;height:3px;border-radius:2px;background:#3a2a24"></div>
<div class="a" style="left:42px;top:106px;width:26px;height:6px;border-radius:2px 2px 13px 13px;background:#f4ece6"></div>
<div class="t" style="left:16px;top:100px;font-size:5px;font-weight:700;color:#cfeff0;transform:rotate(-90deg);transform-origin:0 0;letter-spacing:0">SAMPLE</div>
<div class="t" style="left:114px;top:43px;font-size:4.5px;font-weight:700;color:#222;letter-spacing:0">LICENSE/ID NO</div>
<div class="t" style="left:170px;top:43px;font-size:4.5px;font-weight:700;color:#222;letter-spacing:0">CLASS</div>
<div class="t" style="left:197px;top:43px;font-size:4.5px;font-weight:700;color:#222;letter-spacing:0">EXPIRATION DATE</div>
<div class="a" style="left:112px;top:49px;width:137px;height:14px;border:1px solid #c64a58"></div>
<div class="t" style="left:117px;top:52px;font-size:8.5px;font-weight:700;color:#222;letter-spacing:0">007000100</div>
<div class="t" style="left:178px;top:52px;font-size:8.5px;font-weight:700;color:#333;letter-spacing:0">E</div>
<div class="t" style="left:198px;top:52px;font-size:8.5px;font-weight:700;color:#222;letter-spacing:0">10-10-2023</div>
<div class="t" style="left:98px;top:65.5px;font-size:4px;font-weight:700;color:#3f6aa8;letter-spacing:0">DOB</div>
<div class="t" style="left:110px;top:63.5px;font-size:8.5px;font-weight:700;color:#222;letter-spacing:0">10-10-1979</div>
<div class="t" style="left:188px;top:65.5px;font-size:4px;font-weight:700;color:#3f6aa8;letter-spacing:0">ISSUE DATE</div>
<div class="t" style="left:218px;top:63.5px;font-size:8.5px;font-weight:700;color:#222;letter-spacing:0">12-22-2019</div>
<div class="t" style="left:97.5px;top:72px;font-size:7.5px;font-weight:700;color:#222;letter-spacing:0.2px">SAMPLE</div>
<div class="t" style="left:97.5px;top:80px;font-size:7.5px;font-weight:700;color:#222;letter-spacing:0.2px">JELANI</div>
<div class="t" style="left:97.5px;top:89px;font-size:6px;font-weight:700;color:#222;letter-spacing:0">123 NORTH MAIN STREET</div>
<div class="t" style="left:97.5px;top:95px;font-size:6px;font-weight:700;color:#222;letter-spacing:0">APT. 1</div>
<div class="t" style="left:97.5px;top:101px;font-size:6px;font-weight:700;color:#222;letter-spacing:0">BATON ROUGE, LA 70806-1234</div>
<div class="t" style="left:114px;top:110px;font-size:4.5px;font-weight:700;color:#4a78b8;letter-spacing:0.2px">ENDORSEMENTS</div>
<div class="t" style="left:127px;top:116px;font-size:6px;font-weight:700;color:#222;letter-spacing:0">NONE</div>
<div class="t" style="left:195px;top:110px;font-size:4.5px;font-weight:700;color:#4a78b8;letter-spacing:0.2px">RESTRICTIONS</div>
<div class="t" style="left:212px;top:116px;font-size:6px;font-weight:700;color:#222;letter-spacing:0">01</div>
<div class="t" style="left:98px;top:127px;font-size:4.5px;font-weight:700;color:#4a78b8;letter-spacing:0">SEX&nbsp;&nbsp;&nbsp;&nbsp;HGT&nbsp;&nbsp;&nbsp;&nbsp;WGT</div>
<div class="t" style="left:100px;top:132px;font-size:6px;font-weight:700;color:#222;letter-spacing:0">M&nbsp;&nbsp;5' 08"&nbsp;&nbsp;175</div>
<div class="t" style="left:167px;top:127px;font-size:4.5px;font-weight:700;color:#4a78b8;letter-spacing:0">EYES&nbsp;&nbsp;AUDIT&nbsp;&nbsp;OFFICE</div>
<div class="t" style="left:167px;top:132px;font-size:6px;font-weight:700;color:#222;letter-spacing:0">BRO&nbsp;&nbsp;1234&nbsp;&nbsp;&nbsp;123</div>
<div class="t" style="left:197px;top:142px;font-size:4.5px;font-weight:700;color:#4a78b8;letter-spacing:0">PARISH</div>
<div class="t" style="left:202px;top:148px;font-size:6px;font-weight:700;color:#222;letter-spacing:0">12</div>
<div class="t" style="left:96px;top:145px;font-family:'Liberation Serif',serif;font-style:italic;font-size:16px;color:#1a1a1a;letter-spacing:-0.8px">Jelani Sample</div>
<div class="a" style="left:220px;top:104px;width:41px;height:54px;background:rgba(130,185,205,0.55)"></div>
<div class="a" style="left:231px;top:110px;width:24px;height:34px;border-radius:12px;background:rgba(170,130,105,0.55)"></div>
<div class="a" style="left:226px;top:140px;width:35px;height:18px;border-radius:14px 14px 0 0;background:rgba(150,140,90,0.45)"></div>
</div>
<div class="a" style="left:1656px;top:396px;width:32px;height:32px;background:#e3ac00;border-radius:50%"></div>
<svg style="left:1664px;top:402px" width="16" height="18" viewBox="0 0 16 18"><circle cx="8" cy="5" r="4" fill="#fff"/><path d="M1 17 V14 Q1 10.5 5 10.5 H11 Q15 10.5 15 14 V17 Z" fill="#fff"/></svg>
<div class="a" style="left:1655px;top:447px;width:34px;height:34px;border:1px solid #6e7278;border-radius:50%"></div>
<svg style="left:1663px;top:455px" width="18" height="18" viewBox="0 0 18 18"><path d="M3 9 A6 6 0 1 0 5 4.5" fill="none" stroke="#5f6368" stroke-width="1.5"/><path d="M2.5 2.5 V6 H6" fill="none" stroke="#5f6368" stroke-width="1.5"/><path d="M9 5.5 V9.5 L11.5 11" fill="none" stroke="#5f6368" stroke-width="1.5"/></svg>
<div class="a" style="left:1655px;top:499px;width:34px;height:34px;border:1px solid #6e7278;border-radius:50%"></div>
<svg style="left:1663px;top:508px" width="18" height="16" viewBox="0 0 18 16"><path d="M0.5 2 L1.8 3.3 L4 1 M0.5 7.5 L1.8 8.8 L4 6.5" fill="none" stroke="#5f6368" stroke-width="1.2"/><circle cx="2" cy="13.5" r="1.2" fill="#5f6368"/><rect x="6" y="1.5" width="11" height="2" fill="#5f6368"/><rect x="6" y="7" width="11" height="2" fill="#5f6368"/><rect x="6" y="12.5" width="11" height="2" fill="#5f6368"/></svg>
<div class="a" style="left:1700px;top:388px;width:1px;height:785px;background:#cfd2d8"></div>
<div class="a" style="left:1698px;top:388px;width:3px;height:48px;background:#1b7fc6;border-radius:2px"></div>
<div class="t " style="left:1709px;top:391.65px;font-size:14px;color:#2b7fc4;font-weight:400;letter-spacing:0.01em">FRANCIS TURNER</div>
<div class="t " style="left:1709px;top:410.73px;font-size:14.5px;color:#6e7278;font-weight:400;">Patient Info</div>
<div class="a" style="left:1913.5px;top:401.5px;width:3px;height:3px;background:#1d5fa0;border-radius:50%"></div>
<div class="a" style="left:1913.5px;top:406px;width:3px;height:3px;background:#1d5fa0;border-radius:50%"></div>
<div class="a" style="left:1913.5px;top:410.5px;width:3px;height:3px;background:#1d5fa0;border-radius:50%"></div>
<div class="a" style="left:1709px;top:435px;width:222px;height:1px;background:#cfd2d8"></div>
<div class="t " style="left:1709px;top:453.42px;font-size:12.5px;color:#7a7e85;font-weight:400;">MRN</div>
<div class="t " style="left:1820px;top:453.42px;font-size:12.5px;color:#7a7e85;font-weight:400;">External ID</div>
<div class="t " style="left:1709px;top:472.42px;font-size:12.5px;color:#2f3338;font-weight:400;">IDS5107</div>
<div class="t " style="left:1820px;top:472.42px;font-size:12.5px;color:#2f3338;font-weight:400;"></div>
<div class="t " style="left:1709px;top:497.42px;font-size:12.5px;color:#7a7e85;font-weight:400;">DOB</div>
<div class="t " style="left:1820px;top:497.42px;font-size:12.5px;color:#7a7e85;font-weight:400;">Age</div>
<div class="t " style="left:1709px;top:516.42px;font-size:12.5px;color:#2f3338;font-weight:400;">12/28/1981</div>
<div class="t " style="left:1820px;top:516.42px;font-size:12.5px;color:#2f3338;font-weight:400;">41</div>
<div class="t " style="left:1709px;top:541.42px;font-size:12.5px;color:#7a7e85;font-weight:400;">Sex</div>
<div class="t " style="left:1820px;top:541.42px;font-size:12.5px;color:#7a7e85;font-weight:400;">Social Security #</div>
<div class="t " style="left:1709px;top:560.42px;font-size:12.5px;color:#2f3338;font-weight:400;">Male</div>
<div class="t " style="left:1820px;top:560.42px;font-size:12.5px;color:#2f3338;font-weight:400;"></div>
<div class="t " style="left:1709px;top:585.42px;font-size:12.5px;color:#7a7e85;font-weight:400;">Language</div>
<div class="t " style="left:1820px;top:585.42px;font-size:12.5px;color:#7a7e85;font-weight:400;">Translator</div>
<div class="t " style="left:1709px;top:604.42px;font-size:12.5px;color:#2f3338;font-weight:400;">--</div>
<div class="t " style="left:1820px;top:604.42px;font-size:12.5px;color:#2f3338;font-weight:400;">No</div>
<div class="t " style="left:1709px;top:647.80px;font-size:15px;color:#2f3338;font-weight:400;">Contact Information</div>
<div class="a" style="left:1709px;top:668px;width:222px;height:1px;background:#cfd2d8"></div>
<div class="t " style="left:1709px;top:679.42px;font-size:12.5px;color:#7a7e85;font-weight:400;">Home #</div>
<div class="t " style="left:1820px;top:679.42px;font-size:12.5px;color:#7a7e85;font-weight:400;">Cell #</div>
<div class="t " style="left:1709px;top:698.42px;font-size:12.5px;color:#2f3338;font-weight:400;">(305) 555-7321</div>
<div class="t " style="left:1709px;top:723.42px;font-size:12.5px;color:#7a7e85;font-weight:400;">Work Phone #</div>
<div class="t " style="left:1709px;top:766.92px;font-size:12.5px;color:#7a7e85;font-weight:400;">Address</div>
<div class="t " style="left:1709px;top:786.42px;font-size:12.5px;color:#2f3338;font-weight:400;">564 THUNDER ROAD</div>
<div class="t " style="left:1709px;top:821.92px;font-size:12.5px;color:#2f3338;font-weight:400;">HAMPSHIRE, FL 33333</div>
<div class="t " style="left:1709px;top:847.42px;font-size:12.5px;color:#7a7e85;font-weight:400;">Email</div>
<div class="t " style="left:1709px;top:866.42px;font-size:12.5px;color:#2f3338;font-weight:400;">franktuner@aol.com</div>
<div class="t " style="left:1709px;top:901.30px;font-size:15px;color:#2f3338;font-weight:400;">Primary Contacts</div>
<div class="a" style="left:1709px;top:921px;width:222px;height:1px;background:#cfd2d8"></div>
<div class="a" style="left:1709px;top:930px;width:222px;height:115px;background:#f0f1f4;border-top:4px solid #6e7079;border-radius:4px 4px 2px 2px"></div>
<div class="a" style="left:1721px;top:958px;width:65px;height:65px;background:#a9aeb4;border-radius:50%"></div>
<svg style="left:1740px;top:976px" width="28" height="30" viewBox="0 0 28 30"><rect x="1.5" y="1.5" width="21" height="27" rx="3" fill="none" stroke="#fff" stroke-width="2"/><path d="M22.5 6 H25 M22.5 11 H25 M22.5 16 H25" stroke="#fff" stroke-width="2"/><circle cx="12" cy="11" r="3.5" fill="none" stroke="#fff" stroke-width="1.8"/><path d="M6 22 Q6 16.5 12 16.5 Q18 16.5 18 22" fill="none" stroke="#fff" stroke-width="1.8"/></svg>
<div class="t " style="left:1794px;top:949.61px;font-size:17px;color:#2f3338;font-weight:400;">No contacts</div>
<div class="t " style="left:1794px;top:973.61px;font-size:17px;color:#2f3338;font-weight:400;">added</div>
<div class="a" style="left:1794px;top:1006px;width:117px;height:28px;border:1px solid #1b7fc6;border-radius:4px;background:#fff"></div>
<div class="t " style="left:1803px;top:1012.73px;font-size:14.5px;color:#1b7fc6;font-weight:400;">+ Add Contact</div>
</body></html>
